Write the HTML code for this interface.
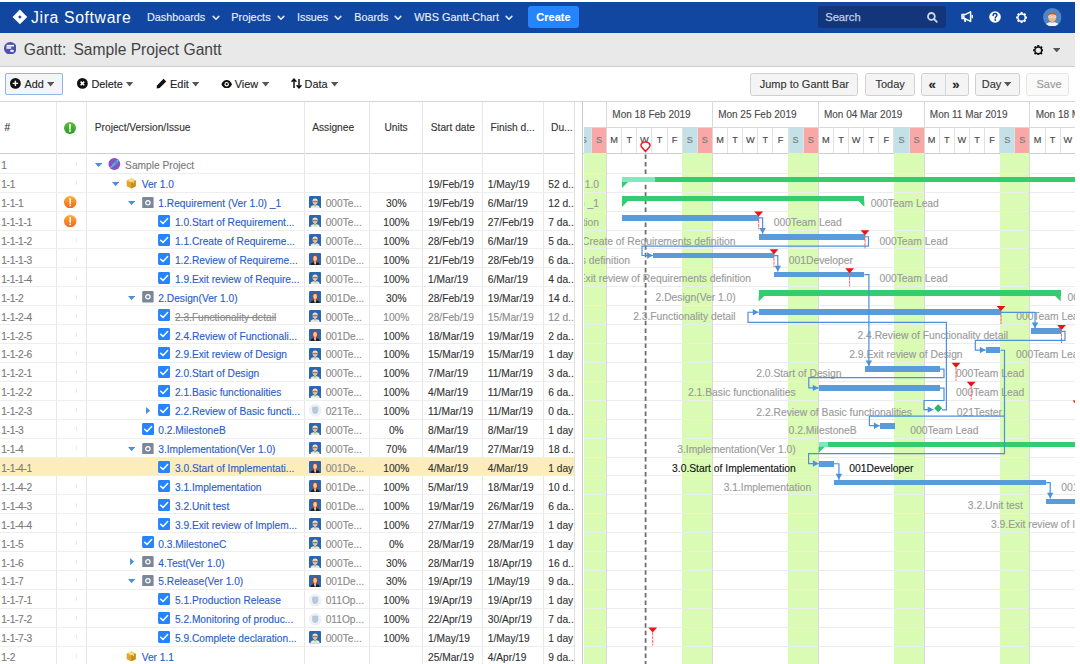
<!DOCTYPE html><html><head><meta charset="utf-8"><title>Gantt</title><style>
*{box-sizing:border-box;margin:0;padding:0}
html,body{width:1080px;height:664px;overflow:hidden;background:#fff}
body{position:relative;font-family:"Liberation Sans",sans-serif;color:#333}
.a{-webkit-text-stroke:0.12px currentColor}
.a{position:absolute;white-space:nowrap}
.nav{left:0;top:2px;width:1075px;height:30.5px;background:#1147a0}
.nt{color:#e6eeff;font-size:11.6px;top:11px}
.chev{position:absolute;width:5px;height:5px;border-right:1.6px solid #dfe9ff;border-bottom:1.6px solid #dfe9ff;transform:rotate(45deg)}
.title{left:0;top:32.5px;width:1075px;height:34.5px;background:#e9e9ea;border-bottom:1.2px solid #cdcdcd}
.tb{font-size:11.4px;color:#333;top:78px}
.caret{position:absolute;width:0;height:0;border-left:3.6px solid transparent;border-right:3.6px solid transparent;border-top:4px solid #555}
.btn{position:absolute;border:1px solid #d4d4d4;border-radius:3px;background:#f5f5f5;font-size:11.6px;color:#333;text-align:center}
.hl{background:#ddd}
.th{font-size:11.2px;color:#333}
.td{font-size:11.2px;color:#333}
.bar{position:absolute;background:#5b9bd8}
.gl{font-size:11.2px;color:#999}
</style></head><body>
<div class="a nav"></div>
<svg class="a" style="left:12.4px;top:9.4px" width="15.8" height="15.8" viewBox="0 0 17 17">
<path d="M8.5 0.6 L16.4 8.5 L8.5 16.4 L0.6 8.5 Z" fill="#fff"/>
<path d="M8.5 6.6 L10.4 8.5 L8.5 10.4 L6.6 8.5 Z" fill="#1147a0"/>
<path d="M8.5 0.6 L5.2 3.9 L6.2 4.9 L8.5 2.6 Z" fill="#c9d8f2" opacity="0.6"/>
</svg>
<div class="a" style="left:31.10px;top:10.23px;font-size:15.80px;line-height:1;color:#fff;letter-spacing:0.62px;-webkit-text-stroke:0">Jira Software</div>
<div class="a" style="left:147.00px;top:12.16px;font-size:10.80px;line-height:1;color:#e8efff;font-weight:normal">Dashboards</div>
<svg class="a" style="left:211.5px;top:14.5px" width="8" height="6" viewBox="0 0 8 6"><path d="M1.2 1.4 L4 4.2 L6.8 1.4" fill="none" stroke="#dfe9ff" stroke-width="1.6" stroke-linecap="round" stroke-linejoin="round"/></svg>
<div class="a" style="left:231.25px;top:12.07px;font-size:10.90px;line-height:1;color:#e8efff;font-weight:normal">Projects</div>
<svg class="a" style="left:276.5px;top:14.5px" width="8" height="6" viewBox="0 0 8 6"><path d="M1.2 1.4 L4 4.2 L6.8 1.4" fill="none" stroke="#dfe9ff" stroke-width="1.6" stroke-linecap="round" stroke-linejoin="round"/></svg>
<div class="a" style="left:297.00px;top:12.16px;font-size:10.80px;line-height:1;color:#e8efff;font-weight:normal">Issues</div>
<svg class="a" style="left:334.0px;top:14.5px" width="8" height="6" viewBox="0 0 8 6"><path d="M1.2 1.4 L4 4.2 L6.8 1.4" fill="none" stroke="#dfe9ff" stroke-width="1.6" stroke-linecap="round" stroke-linejoin="round"/></svg>
<div class="a" style="left:354.25px;top:12.16px;font-size:10.80px;line-height:1;color:#e8efff;font-weight:normal">Boards</div>
<svg class="a" style="left:394.0px;top:14.5px" width="8" height="6" viewBox="0 0 8 6"><path d="M1.2 1.4 L4 4.2 L6.8 1.4" fill="none" stroke="#dfe9ff" stroke-width="1.6" stroke-linecap="round" stroke-linejoin="round"/></svg>
<div class="a" style="left:414.25px;top:12.07px;font-size:10.90px;line-height:1;color:#e8efff;font-weight:normal">WBS Gantt-Chart</div>
<svg class="a" style="left:505.0px;top:14.5px" width="8" height="6" viewBox="0 0 8 6"><path d="M1.2 1.4 L4 4.2 L6.8 1.4" fill="none" stroke="#dfe9ff" stroke-width="1.6" stroke-linecap="round" stroke-linejoin="round"/></svg>
<div class="a" style="left:528.3px;top:6.3px;width:50.5px;height:22px;background:#2684ff;border-radius:3px"></div>
<div class="a" style="left:536.30px;top:11.99px;font-size:11.00px;line-height:1;color:#fff;font-weight:bold">Create</div>
<div class="a" style="left:817.6px;top:6.2px;width:128px;height:21.8px;background:#13367a;border-radius:3px"></div>
<div class="a" style="left:825.20px;top:11.72px;font-size:11.20px;line-height:1;color:#c3cee6;-webkit-text-stroke:0.25px currentColor">Search</div>
<svg class="a" style="left:926px;top:11px" width="13" height="13" viewBox="0 0 13 13">
<circle cx="5.4" cy="5.4" r="3.4" fill="none" stroke="#cdd6ea" stroke-width="1.8"/>
<path d="M7.9 7.9 L10.8 10.8" stroke="#cdd6ea" stroke-width="1.9" stroke-linecap="round"/></svg>
<svg class="a" style="left:961.3px;top:11.4px" width="12" height="11.5" viewBox="0 0 12 11.5">
<path d="M1 3.6 H4 L9.6 0.8 V10.4 L4 7.6 H1 Z" fill="none" stroke="#fff" stroke-width="1.5" stroke-linejoin="round"/>
<path d="M1.6 4.3 H3.6 V6.9 H1.6 Z" fill="#fff"/>
<path d="M2.8 7.6 L3.4 11 H5.2 L4.8 7.6" fill="#fff"/>
<path d="M11.2 4.4 V6.8" stroke="#fff" stroke-width="1.4" stroke-linecap="round"/></svg>
<svg class="a" style="left:988.5px;top:11px" width="12" height="12" viewBox="0 0 12 12">
<circle cx="6" cy="6" r="5.8" fill="#fff"/>
<path d="M4.1 4.6 C4.1 3.3 5 2.6 6 2.6 C7.1 2.6 7.9 3.3 7.9 4.3 C7.9 5.5 6.3 5.6 6.3 7" fill="none" stroke="#0f47a7" stroke-width="1.5" stroke-linecap="round"/>
<circle cx="6.2" cy="9" r="0.9" fill="#1147a0"/></svg>
<svg class="a" style="left:1016.3px;top:11.6px" width="11.2" height="11.2" viewBox="0 0 24 24">
<path fill="#fff" d="M21.09 9.61 L23.81 9.89 L23.81 14.11 L21.09 14.39 L20.12 16.74 L21.84 18.86 L18.86 21.84 L16.74 20.12 L14.39 21.09 L14.11 23.81 L9.89 23.81 L9.61 21.09 L7.26 20.12 L5.14 21.84 L2.16 18.86 L3.88 16.74 L2.91 14.39 L0.19 14.11 L0.19 9.89 L2.91 9.61 L3.88 7.26 L2.16 5.14 L5.14 2.16 L7.26 3.88 L9.61 2.91 L9.89 0.19 L14.11 0.19 L14.39 2.91 L16.74 3.88 L18.86 2.16 L21.84 5.14 L20.12 7.26 Z"/>
<circle cx="12" cy="12" r="6.3" fill="#1147a0"/></svg>
<svg class="a" style="left:1043px;top:7.6px" width="18.5" height="18.5" viewBox="0 0 20 20">
<defs><clipPath id="avc"><circle cx="10" cy="10" r="10"/></clipPath></defs>
<g clip-path="url(#avc)">
<rect width="20" height="20" fill="#4f86c6"/>
<ellipse cx="10" cy="20" rx="8" ry="5" fill="#f2f2f2"/>
<rect x="8.4" y="13" width="3.2" height="3" fill="#e9a77a"/>
<ellipse cx="10" cy="10" rx="4.4" ry="5" fill="#f0b48a"/>
<path d="M5.4 8.5 C5.2 3.5 14.8 3.5 14.6 8.5 C13.5 6.2 6.5 6.2 5.4 8.5 Z" fill="#c25a25"/>
<rect x="6.2" y="8.3" width="3.2" height="2.2" rx="1" fill="none" stroke="#eee" stroke-width="0.8"/>
<rect x="10.6" y="8.3" width="3.2" height="2.2" rx="1" fill="none" stroke="#eee" stroke-width="0.8"/>
</g></svg>
<div class="a title"></div>
<svg class="a" style="left:3.7px;top:41.9px" width="12.6" height="12.6" viewBox="0 0 12.6 12.6">
<circle cx="6.3" cy="6.3" r="6.3" fill="#4d51ad"/>
<rect x="2.6" y="2.9" width="7.4" height="1.6" fill="#fff"/>
<rect x="2.4" y="4.5" width="4.8" height="2.4" fill="#fff" opacity="0.8"/>
<rect x="6.2" y="7.8" width="3.6" height="2.1" rx="1" fill="#fff" opacity="0.9"/></svg>
<div class="a" style="left:23.80px;top:42.29px;font-size:15.60px;line-height:1;color:#444;-webkit-text-stroke:0">Gantt:<span style="display:inline-block;width:7.2px"></span>Sample Project Gantt</div>
<svg class="a" style="left:1032.5px;top:44.5px" width="10.6" height="10.6" viewBox="0 0 24 24">
<path fill="#111" d="M21.09 9.61 L23.81 9.89 L23.81 14.11 L21.09 14.39 L20.12 16.74 L21.84 18.86 L18.86 21.84 L16.74 20.12 L14.39 21.09 L14.11 23.81 L9.89 23.81 L9.61 21.09 L7.26 20.12 L5.14 21.84 L2.16 18.86 L3.88 16.74 L2.91 14.39 L0.19 14.11 L0.19 9.89 L2.91 9.61 L3.88 7.26 L2.16 5.14 L5.14 2.16 L7.26 3.88 L9.61 2.91 L9.89 0.19 L14.11 0.19 L14.39 2.91 L16.74 3.88 L18.86 2.16 L21.84 5.14 L20.12 7.26 Z"/>
<circle cx="12" cy="12" r="6" fill="#e9e9ea"/></svg>
<svg class="a" style="left:1053px;top:47.8px" width="7.4" height="4.4" viewBox="0 0 7.4 4.4"><path d="M0 0 H7.4 L3.7 4.4 Z" fill="#555"/></svg>
<div class="a" style="left:4.5px;top:73.4px;width:58.4px;height:22.1px;border:1px solid #8db6e6;border-radius:2px;background:#f3f5f8"></div>
<svg class="a" style="left:10.2px;top:78.4px" width="10.8" height="10.8" viewBox="0 0 12 12">
<circle cx="6" cy="6" r="6" fill="#111"/><path d="M6 3 V9 M3 6 H9" stroke="#fff" stroke-width="1.6"/></svg>
<div class="a" style="left:24.60px;top:79.46px;font-size:10.80px;line-height:1;color:#222;">Add</div>
<svg class="a" style="left:47.3px;top:82.4px" width="7.2" height="4.4" viewBox="0 0 7.2 4.4"><path d="M0 0 H7.2 L3.6 4.4 Z" fill="#555"/></svg>
<svg class="a" style="left:77px;top:78.4px" width="10.8" height="10.8" viewBox="0 0 12 12">
<circle cx="6" cy="6" r="6" fill="#111"/><path d="M4 4 L8 8 M8 4 L4 8" stroke="#fff" stroke-width="1.7"/></svg>
<div class="a" style="left:91.40px;top:79.37px;font-size:10.90px;line-height:1;color:#222;">Delete</div>
<svg class="a" style="left:126.4px;top:82.4px" width="7.2" height="4.4" viewBox="0 0 7.2 4.4"><path d="M0 0 H7.2 L3.6 4.4 Z" fill="#555"/></svg>
<svg class="a" style="left:155.8px;top:78.2px" width="11" height="11" viewBox="0 0 11 11">
<path d="M7.6 0.8 L10.2 3.4 L3.6 10 L0.6 10.4 L1 7.4 Z" fill="#111"/></svg>
<div class="a" style="left:170.10px;top:79.37px;font-size:10.90px;line-height:1;color:#222;">Edit</div>
<svg class="a" style="left:191.5px;top:82.4px" width="7.2" height="4.4" viewBox="0 0 7.2 4.4"><path d="M0 0 H7.2 L3.6 4.4 Z" fill="#555"/></svg>
<svg class="a" style="left:220.8px;top:79.6px" width="11.4" height="8.4" viewBox="0 0 12 9">
<path d="M0.3 4.5 C2 1 4 0 6 0 C8 0 10 1 11.7 4.5 C10 8 8 9 6 9 C4 9 2 8 0.3 4.5 Z" fill="#111"/>
<circle cx="6" cy="4.5" r="2.4" fill="#fff"/><circle cx="6" cy="4.5" r="1.2" fill="#111"/></svg>
<div class="a" style="left:234.70px;top:79.37px;font-size:10.90px;line-height:1;color:#222;">View</div>
<svg class="a" style="left:261.6px;top:82.4px" width="7.2" height="4.4" viewBox="0 0 7.2 4.4"><path d="M0 0 H7.2 L3.6 4.4 Z" fill="#555"/></svg>
<svg class="a" style="left:290.5px;top:78.2px" width="11" height="11" viewBox="0 0 11 11">
<path d="M3 10 V1.5 M0.6 3.8 L3 1.2 L5.4 3.8" fill="none" stroke="#111" stroke-width="1.5"/>
<path d="M8 1 V9.5 M5.6 7.2 L8 9.8 L10.4 7.2" fill="none" stroke="#111" stroke-width="1.5"/></svg>
<div class="a" style="left:304.60px;top:79.37px;font-size:10.90px;line-height:1;color:#222;">Data</div>
<svg class="a" style="left:330.9px;top:82.4px" width="7.2" height="4.4" viewBox="0 0 7.2 4.4"><path d="M0 0 H7.2 L3.6 4.4 Z" fill="#555"/></svg>
<div class="a" style="left:750.3px;top:72.7px;width:108.0px;height:23.8px;border:1px solid #d0d0d0;border-radius:2.5px;background:#f4f4f4"></div>
<div class="a" style="left:759.70px;top:79.29px;font-size:11.00px;line-height:1;color:#333;">Jump to Gantt Bar</div>
<div class="a" style="left:865.3px;top:72.7px;width:49.4px;height:23.8px;border:1px solid #d0d0d0;border-radius:2.5px;background:#f4f4f4"></div>
<div class="a" style="left:875.50px;top:79.29px;font-size:11.00px;line-height:1;color:#333;">Today</div>
<div class="a" style="left:921.2px;top:72.7px;width:47.4px;height:23.8px;border:1px solid #d0d0d0;border-radius:2.5px;background:#f4f4f4"></div>
<div class="a" style="left:945.2px;top:73px;width:1px;height:23px;background:#d6d6d6"></div>
<div class="a" style="left:928.60px;top:77.83px;font-size:13.20px;line-height:1;color:#222;font-weight:bold">&laquo;</div>
<div class="a" style="left:952.20px;top:77.83px;font-size:13.20px;line-height:1;color:#222;font-weight:bold">&raquo;</div>
<div class="a" style="left:975.0px;top:72.7px;width:44.7px;height:23.8px;border:1px solid #d0d0d0;border-radius:2.5px;background:#f4f4f4"></div>
<div class="a" style="left:981.70px;top:79.29px;font-size:11.00px;line-height:1;color:#333;">Day</div>
<svg class="a" style="left:1003.9px;top:82.4px" width="7.2" height="4.4" viewBox="0 0 7.2 4.4"><path d="M0 0 H7.2 L3.6 4.4 Z" fill="#555"/></svg>
<div class="a" style="left:1026.4px;top:72.7px;width:42.2px;height:23.8px;border:1px solid #e6e6e6;border-radius:2.5px;background:#fafafa"></div>
<div class="a" style="left:1036.50px;top:79.29px;font-size:11.00px;line-height:1;color:#999;">Save</div>
<div class="a" style="left:0;top:101px;width:1075px;height:1.1px;background:#d4d4d4"></div>
<div class="a" style="left:0;top:152.6px;width:574px;height:1.6px;background:#cfcfcf"></div>
<div class="a" style="left:583px;top:152.6px;width:492px;height:1.4px;background:#cfcfcf"></div>
<div class="a" style="left:55.90px;top:101.5px;width:1px;height:563px;background:#e7e7e7"></div>
<div class="a" style="left:86.00px;top:101.5px;width:1px;height:563px;background:#e7e7e7"></div>
<div class="a" style="left:303.80px;top:101.5px;width:1px;height:563px;background:#e7e7e7"></div>
<div class="a" style="left:369.20px;top:101.5px;width:1px;height:563px;background:#e7e7e7"></div>
<div class="a" style="left:422.00px;top:101.5px;width:1px;height:563px;background:#e7e7e7"></div>
<div class="a" style="left:482.00px;top:101.5px;width:1px;height:563px;background:#e7e7e7"></div>
<div class="a" style="left:542.80px;top:101.5px;width:1px;height:563px;background:#e7e7e7"></div>
<div class="a" style="left:574px;top:101.5px;width:9px;height:563px;background:#fff;border-left:1px solid #e0e0e0;border-right:1px solid #c8c8c8"></div>
<div class="a" style="left:4.40px;top:122.87px;font-size:10.20px;line-height:1;color:#333;">#</div>
<svg class="a" style="left:64.3px;top:121.6px" width="12" height="12" viewBox="0 0 12 12">
<defs><linearGradient id="gg" x1="0" y1="0" x2="0" y2="1"><stop offset="0" stop-color="#5cc23a"/><stop offset="1" stop-color="#2e9a2a"/></linearGradient></defs>
<circle cx="6" cy="6" r="6" fill="url(#gg)"/><path d="M6 2.6 V6.8" stroke="#fff" stroke-width="1.8" stroke-linecap="round"/><circle cx="6" cy="9" r="0.95" fill="#fff"/></svg>
<div class="a" style="left:94.80px;top:122.87px;font-size:10.20px;line-height:1;color:#333;">Project/Version/Issue</div>
<div class="a" style="left:312.20px;top:122.87px;font-size:10.20px;line-height:1;color:#333;">Assignee</div>
<div class="a" style="left:384.40px;top:122.87px;font-size:10.20px;line-height:1;color:#333;">Units</div>
<div class="a" style="left:430.80px;top:122.87px;font-size:10.20px;line-height:1;color:#333;">Start date</div>
<div class="a" style="left:490.60px;top:122.87px;font-size:10.20px;line-height:1;color:#333;">Finish d...</div>
<div class="a" style="left:551.10px;top:122.87px;font-size:10.20px;line-height:1;color:#333;">Du...</div>
<div class="a" style="left:0;top:457.46px;width:574px;height:18.42px;background:#fcedbb"></div>
<div class="a" style="left:0;top:172.82px;width:574px;height:1px;background:#eeeeee"></div>
<div class="a" style="left:1.20px;top:161.27px;font-size:10.20px;line-height:1;color:#7a7a7a;letter-spacing:-0.3px">1</div>
<div class="a" style="left:76.2px;top:162.30px;width:0.8px;height:4px;background:#e2f1de"></div>
<svg class="a" style="left:95.0px;top:163.1px" width="7.2" height="4.2" viewBox="0 0 7 4"><path d="M0 0 H7 L3.5 4 Z" fill="#4a8fdd"/></svg>
<svg class="a" style="left:108.0px;top:158.2px" width="12.7" height="12" viewBox="0 0 12 12">
<circle cx="6" cy="6" r="5.9" fill="#8a4fc8"/>
<path d="M2.8 9.2 L4 6.4 L7.8 2.6 C8.6 1.9 9.7 2 10 2.3 C10.2 2.6 10.2 3.6 9.5 4.3 L5.6 8 Z" fill="#3cc4c9"/>
<circle cx="7.6" cy="4.4" r="0.9" fill="#8a4fc8"/>
<path d="M2.4 9.6 L3.6 8.4" stroke="#fff" stroke-width="0.8"/></svg>
<div class="a" style="left:125.10px;top:161.27px;font-size:10.20px;line-height:1;color:#7a7a7a;">Sample Project</div>
<div class="a" style="left:0;top:191.73px;width:574px;height:1px;background:#eeeeee"></div>
<div class="a" style="left:1.20px;top:180.18px;font-size:10.20px;line-height:1;color:#7a7a7a;letter-spacing:-0.3px">1-1</div>
<div class="a" style="left:76.2px;top:181.22px;width:0.8px;height:4px;background:#e2f1de"></div>
<svg class="a" style="left:111.6px;top:182.0px" width="7.2" height="4.2" viewBox="0 0 7 4"><path d="M0 0 H7 L3.5 4 Z" fill="#4a8fdd"/></svg>
<svg class="a" style="left:125.9px;top:177.8px" width="10.4" height="10.8" viewBox="0 0 10 11">
<path d="M5 0.5 L9.6 2.6 V8.4 L5 10.6 L0.4 8.4 V2.6 Z" fill="#dea530"/>
<path d="M5 0.5 L9.6 2.6 L5 4.6 L0.4 2.6 Z" fill="#f7cf5e"/>
<path d="M5 4.6 L9.6 2.6 V8.4 L5 10.6 Z" fill="#c98b1c"/>
<path d="M2.6 1.5 L7.2 3.6 V5.2" fill="none" stroke="#fff3c0" stroke-width="0.8"/></svg>
<div class="a" style="left:141.70px;top:180.18px;font-size:10.20px;line-height:1;color:#2a5cc9;">Ver 1.0</div>
<div class="a" style="left:428.00px;top:180.18px;font-size:10.20px;line-height:1;color:#333;">19/Feb/19</div>
<div class="a" style="left:487.80px;top:180.18px;font-size:10.20px;line-height:1;color:#333;">1/May/19</div>
<div class="a" style="left:548.30px;top:180.18px;font-size:10.20px;line-height:1;color:#333;">52 d..</div>
<div class="a" style="left:0;top:210.65px;width:574px;height:1px;background:#eeeeee"></div>
<div class="a" style="left:1.20px;top:199.10px;font-size:10.20px;line-height:1;color:#7a7a7a;letter-spacing:-0.3px">1-1-1</div>
<svg class="a" style="left:64.3px;top:196.1px" width="12.4" height="12.4" viewBox="0 0 12 12">
<defs><linearGradient id="og202" x1="0" y1="0" x2="0" y2="1"><stop offset="0" stop-color="#fcae32"/><stop offset="1" stop-color="#f26522"/></linearGradient></defs>
<circle cx="6" cy="6" r="6" fill="url(#og202)"/><path d="M6 2.4 V7" stroke="#fff" stroke-width="1.5" stroke-linecap="round"/><circle cx="6" cy="9.1" r="0.85" fill="#fff"/></svg>
<svg class="a" style="left:128.2px;top:200.9px" width="7.2" height="4.2" viewBox="0 0 7 4"><path d="M0 0 H7 L3.5 4 Z" fill="#4a8fdd"/></svg>
<svg class="a" style="left:141.8px;top:196.6px" width="11.8" height="11.4" viewBox="0 0 12 12">
<rect width="12" height="12" rx="1.3" fill="#7b8698"/><circle cx="6" cy="6" r="2.3" fill="none" stroke="#fff" stroke-width="1.3"/></svg>
<div class="a" style="left:158.30px;top:199.10px;font-size:10.20px;line-height:1;color:#2a5cc9;">1.Requirement (Ver 1.0) _1</div>
<svg class="a" style="left:308.8px;top:196.3px" width="12.2" height="12.2" viewBox="0 0 12 12">
<rect width="12" height="12" rx="1.2" fill="#2b66b3"/>
<path d="M1.4 12 C1.6 9.6 3.2 8.8 6 8.8 C8.8 8.8 10.4 9.6 10.6 12 Z" fill="#e6e8ea"/>
<path d="M4.4 8.8 L6 10.6 L7.6 8.8 Z" fill="#72c23e"/>
<rect x="5.1" y="7.6" width="1.8" height="1.6" fill="#e8b083"/>
<ellipse cx="6" cy="5.4" rx="2.5" ry="2.9" fill="#efc49a"/>
<path d="M3.5 5 C3.3 1.8 8.7 1.8 8.5 5 C7.8 3.6 4.2 3.6 3.5 5 Z" fill="#f4e2b8"/>
<rect x="3.6" y="5" width="4.8" height="1.1" rx="0.4" fill="#6a6a6a" opacity="0.75"/>
</svg>
<div class="a" style="left:325.70px;top:199.10px;font-size:10.20px;line-height:1;color:#8a8a8a;">000Te...</div>
<div class="a" style="left:396.30px;width:0;display:flex;justify-content:center;top:199.10px;font-size:10.20px;line-height:1;color:#333;">30%</div>
<div class="a" style="left:428.00px;top:199.10px;font-size:10.20px;line-height:1;color:#333;">19/Feb/19</div>
<div class="a" style="left:487.80px;top:199.10px;font-size:10.20px;line-height:1;color:#333;">6/Mar/19</div>
<div class="a" style="left:548.30px;top:199.10px;font-size:10.20px;line-height:1;color:#333;">12 d..</div>
<div class="a" style="left:0;top:229.56px;width:574px;height:1px;background:#eeeeee"></div>
<div class="a" style="left:1.20px;top:218.01px;font-size:10.20px;line-height:1;color:#7a7a7a;letter-spacing:-0.3px">1-1-1-1</div>
<svg class="a" style="left:64.3px;top:215.0px" width="12.4" height="12.4" viewBox="0 0 12 12">
<defs><linearGradient id="og221" x1="0" y1="0" x2="0" y2="1"><stop offset="0" stop-color="#fcae32"/><stop offset="1" stop-color="#f26522"/></linearGradient></defs>
<circle cx="6" cy="6" r="6" fill="url(#og221)"/><path d="M6 2.4 V7" stroke="#fff" stroke-width="1.5" stroke-linecap="round"/><circle cx="6" cy="9.1" r="0.85" fill="#fff"/></svg>
<svg class="a" style="left:157.6px;top:214.8px" width="12.1" height="12" viewBox="0 0 12 12">
<rect width="12" height="12" rx="1.4" fill="#2684ff"/><path d="M2.6 6.2 L5 8.4 L9.6 3.6" fill="none" stroke="#fff" stroke-width="1.5" stroke-linecap="round" stroke-linejoin="round"/></svg>
<div class="a" style="left:174.90px;top:218.01px;font-size:10.20px;line-height:1;color:#2a5cc9;">1.0.Start of Requirement...</div>
<svg class="a" style="left:308.8px;top:215.2px" width="12.2" height="12.2" viewBox="0 0 12 12">
<rect width="12" height="12" rx="1.2" fill="#2b66b3"/>
<path d="M1.4 12 C1.6 9.6 3.2 8.8 6 8.8 C8.8 8.8 10.4 9.6 10.6 12 Z" fill="#e6e8ea"/>
<path d="M4.4 8.8 L6 10.6 L7.6 8.8 Z" fill="#72c23e"/>
<rect x="5.1" y="7.6" width="1.8" height="1.6" fill="#e8b083"/>
<ellipse cx="6" cy="5.4" rx="2.5" ry="2.9" fill="#efc49a"/>
<path d="M3.5 5 C3.3 1.8 8.7 1.8 8.5 5 C7.8 3.6 4.2 3.6 3.5 5 Z" fill="#f4e2b8"/>
<rect x="3.6" y="5" width="4.8" height="1.1" rx="0.4" fill="#6a6a6a" opacity="0.75"/>
</svg>
<div class="a" style="left:325.70px;top:218.01px;font-size:10.20px;line-height:1;color:#8a8a8a;">000Te...</div>
<div class="a" style="left:396.30px;width:0;display:flex;justify-content:center;top:218.01px;font-size:10.20px;line-height:1;color:#333;">100%</div>
<div class="a" style="left:428.00px;top:218.01px;font-size:10.20px;line-height:1;color:#333;">19/Feb/19</div>
<div class="a" style="left:487.80px;top:218.01px;font-size:10.20px;line-height:1;color:#333;">27/Feb/19</div>
<div class="a" style="left:548.30px;top:218.01px;font-size:10.20px;line-height:1;color:#333;">7 da..</div>
<div class="a" style="left:0;top:248.48px;width:574px;height:1px;background:#eeeeee"></div>
<div class="a" style="left:1.20px;top:236.93px;font-size:10.20px;line-height:1;color:#7a7a7a;letter-spacing:-0.3px">1-1-1-2</div>
<div class="a" style="left:76.2px;top:237.96px;width:0.8px;height:4px;background:#e2f1de"></div>
<svg class="a" style="left:157.6px;top:233.8px" width="12.1" height="12" viewBox="0 0 12 12">
<rect width="12" height="12" rx="1.4" fill="#2684ff"/><path d="M2.6 6.2 L5 8.4 L9.6 3.6" fill="none" stroke="#fff" stroke-width="1.5" stroke-linecap="round" stroke-linejoin="round"/></svg>
<div class="a" style="left:174.90px;top:236.93px;font-size:10.20px;line-height:1;color:#2a5cc9;">1.1.Create of Requireme...</div>
<svg class="a" style="left:308.8px;top:234.2px" width="12.2" height="12.2" viewBox="0 0 12 12">
<rect width="12" height="12" rx="1.2" fill="#2b66b3"/>
<path d="M1.4 12 C1.6 9.6 3.2 8.8 6 8.8 C8.8 8.8 10.4 9.6 10.6 12 Z" fill="#e6e8ea"/>
<path d="M4.4 8.8 L6 10.6 L7.6 8.8 Z" fill="#72c23e"/>
<rect x="5.1" y="7.6" width="1.8" height="1.6" fill="#e8b083"/>
<ellipse cx="6" cy="5.4" rx="2.5" ry="2.9" fill="#efc49a"/>
<path d="M3.5 5 C3.3 1.8 8.7 1.8 8.5 5 C7.8 3.6 4.2 3.6 3.5 5 Z" fill="#f4e2b8"/>
<rect x="3.6" y="5" width="4.8" height="1.1" rx="0.4" fill="#6a6a6a" opacity="0.75"/>
</svg>
<div class="a" style="left:325.70px;top:236.93px;font-size:10.20px;line-height:1;color:#8a8a8a;">000Te...</div>
<div class="a" style="left:396.30px;width:0;display:flex;justify-content:center;top:236.93px;font-size:10.20px;line-height:1;color:#333;">100%</div>
<div class="a" style="left:428.00px;top:236.93px;font-size:10.20px;line-height:1;color:#333;">28/Feb/19</div>
<div class="a" style="left:487.80px;top:236.93px;font-size:10.20px;line-height:1;color:#333;">6/Mar/19</div>
<div class="a" style="left:548.30px;top:236.93px;font-size:10.20px;line-height:1;color:#333;">5 da..</div>
<div class="a" style="left:0;top:267.40px;width:574px;height:1px;background:#eeeeee"></div>
<div class="a" style="left:1.20px;top:255.85px;font-size:10.20px;line-height:1;color:#7a7a7a;letter-spacing:-0.3px">1-1-1-3</div>
<div class="a" style="left:76.2px;top:256.88px;width:0.8px;height:4px;background:#e2f1de"></div>
<svg class="a" style="left:157.6px;top:252.7px" width="12.1" height="12" viewBox="0 0 12 12">
<rect width="12" height="12" rx="1.4" fill="#2684ff"/><path d="M2.6 6.2 L5 8.4 L9.6 3.6" fill="none" stroke="#fff" stroke-width="1.5" stroke-linecap="round" stroke-linejoin="round"/></svg>
<div class="a" style="left:174.90px;top:255.85px;font-size:10.20px;line-height:1;color:#2a5cc9;">1.2.Review of Requireme...</div>
<svg class="a" style="left:308.8px;top:253.1px" width="12.2" height="12.2" viewBox="0 0 12 12">
<rect width="12" height="12" rx="1.2" fill="#2b66b3"/>
<path d="M3.4 3.6 C3.4 0.8 8.6 0.8 8.6 3.6 L8.9 9.4 H3.1 Z" fill="#a9431f"/>
<path d="M1.6 12 C1.8 9.8 3 9.2 6 9.2 C9 9.2 10.2 9.8 10.4 12 Z" fill="#1d1d1d"/>
<path d="M4.8 9.2 L6 12 L7.2 9.2 Z" fill="#f4efe4"/>
<ellipse cx="6" cy="5.4" rx="1.9" ry="2.6" fill="#f2c6a0"/>
<rect x="5.3" y="7.4" width="1.4" height="2" fill="#eab894"/>
</svg>
<div class="a" style="left:325.70px;top:255.85px;font-size:10.20px;line-height:1;color:#8a8a8a;">001De...</div>
<div class="a" style="left:396.30px;width:0;display:flex;justify-content:center;top:255.85px;font-size:10.20px;line-height:1;color:#333;">100%</div>
<div class="a" style="left:428.00px;top:255.85px;font-size:10.20px;line-height:1;color:#333;">21/Feb/19</div>
<div class="a" style="left:487.80px;top:255.85px;font-size:10.20px;line-height:1;color:#333;">28/Feb/19</div>
<div class="a" style="left:548.30px;top:255.85px;font-size:10.20px;line-height:1;color:#333;">6 da..</div>
<div class="a" style="left:0;top:286.31px;width:574px;height:1px;background:#eeeeee"></div>
<div class="a" style="left:1.20px;top:274.76px;font-size:10.20px;line-height:1;color:#7a7a7a;letter-spacing:-0.3px">1-1-1-4</div>
<div class="a" style="left:76.2px;top:275.80px;width:0.8px;height:4px;background:#e2f1de"></div>
<svg class="a" style="left:157.6px;top:271.6px" width="12.1" height="12" viewBox="0 0 12 12">
<rect width="12" height="12" rx="1.4" fill="#2684ff"/><path d="M2.6 6.2 L5 8.4 L9.6 3.6" fill="none" stroke="#fff" stroke-width="1.5" stroke-linecap="round" stroke-linejoin="round"/></svg>
<div class="a" style="left:174.90px;top:274.76px;font-size:10.20px;line-height:1;color:#2a5cc9;">1.9.Exit review of Require...</div>
<svg class="a" style="left:308.8px;top:272.0px" width="12.2" height="12.2" viewBox="0 0 12 12">
<rect width="12" height="12" rx="1.2" fill="#2b66b3"/>
<path d="M1.4 12 C1.6 9.6 3.2 8.8 6 8.8 C8.8 8.8 10.4 9.6 10.6 12 Z" fill="#e6e8ea"/>
<path d="M4.4 8.8 L6 10.6 L7.6 8.8 Z" fill="#72c23e"/>
<rect x="5.1" y="7.6" width="1.8" height="1.6" fill="#e8b083"/>
<ellipse cx="6" cy="5.4" rx="2.5" ry="2.9" fill="#efc49a"/>
<path d="M3.5 5 C3.3 1.8 8.7 1.8 8.5 5 C7.8 3.6 4.2 3.6 3.5 5 Z" fill="#f4e2b8"/>
<rect x="3.6" y="5" width="4.8" height="1.1" rx="0.4" fill="#6a6a6a" opacity="0.75"/>
</svg>
<div class="a" style="left:325.70px;top:274.76px;font-size:10.20px;line-height:1;color:#8a8a8a;">000Te...</div>
<div class="a" style="left:396.30px;width:0;display:flex;justify-content:center;top:274.76px;font-size:10.20px;line-height:1;color:#333;">100%</div>
<div class="a" style="left:428.00px;top:274.76px;font-size:10.20px;line-height:1;color:#333;">1/Mar/19</div>
<div class="a" style="left:487.80px;top:274.76px;font-size:10.20px;line-height:1;color:#333;">6/Mar/19</div>
<div class="a" style="left:548.30px;top:274.76px;font-size:10.20px;line-height:1;color:#333;">4 da..</div>
<div class="a" style="left:0;top:305.23px;width:574px;height:1px;background:#eeeeee"></div>
<div class="a" style="left:1.20px;top:293.68px;font-size:10.20px;line-height:1;color:#7a7a7a;letter-spacing:-0.3px">1-1-2</div>
<div class="a" style="left:76.2px;top:294.71px;width:0.8px;height:4px;background:#e2f1de"></div>
<svg class="a" style="left:128.2px;top:295.5px" width="7.2" height="4.2" viewBox="0 0 7 4"><path d="M0 0 H7 L3.5 4 Z" fill="#4a8fdd"/></svg>
<svg class="a" style="left:141.8px;top:291.2px" width="11.8" height="11.4" viewBox="0 0 12 12">
<rect width="12" height="12" rx="1.3" fill="#7b8698"/><circle cx="6" cy="6" r="2.3" fill="none" stroke="#fff" stroke-width="1.3"/></svg>
<div class="a" style="left:158.30px;top:293.68px;font-size:10.20px;line-height:1;color:#2a5cc9;">2.Design(Ver 1.0)</div>
<svg class="a" style="left:308.8px;top:290.9px" width="12.2" height="12.2" viewBox="0 0 12 12">
<rect width="12" height="12" rx="1.2" fill="#2b66b3"/>
<path d="M3.4 3.6 C3.4 0.8 8.6 0.8 8.6 3.6 L8.9 9.4 H3.1 Z" fill="#a9431f"/>
<path d="M1.6 12 C1.8 9.8 3 9.2 6 9.2 C9 9.2 10.2 9.8 10.4 12 Z" fill="#1d1d1d"/>
<path d="M4.8 9.2 L6 12 L7.2 9.2 Z" fill="#f4efe4"/>
<ellipse cx="6" cy="5.4" rx="1.9" ry="2.6" fill="#f2c6a0"/>
<rect x="5.3" y="7.4" width="1.4" height="2" fill="#eab894"/>
</svg>
<div class="a" style="left:325.70px;top:293.68px;font-size:10.20px;line-height:1;color:#8a8a8a;">001De...</div>
<div class="a" style="left:396.30px;width:0;display:flex;justify-content:center;top:293.68px;font-size:10.20px;line-height:1;color:#333;">30%</div>
<div class="a" style="left:428.00px;top:293.68px;font-size:10.20px;line-height:1;color:#333;">28/Feb/19</div>
<div class="a" style="left:487.80px;top:293.68px;font-size:10.20px;line-height:1;color:#333;">19/Mar/19</div>
<div class="a" style="left:548.30px;top:293.68px;font-size:10.20px;line-height:1;color:#333;">14 d..</div>
<div class="a" style="left:0;top:324.14px;width:574px;height:1px;background:#eeeeee"></div>
<div class="a" style="left:1.20px;top:312.59px;font-size:10.20px;line-height:1;color:#7a7a7a;letter-spacing:-0.3px">1-1-2-4</div>
<div class="a" style="left:76.2px;top:313.63px;width:0.8px;height:4px;background:#e2f1de"></div>
<svg class="a" style="left:157.6px;top:309.4px" width="12.1" height="12" viewBox="0 0 12 12">
<rect width="12" height="12" rx="1.4" fill="#2684ff"/><path d="M2.6 6.2 L5 8.4 L9.6 3.6" fill="none" stroke="#fff" stroke-width="1.5" stroke-linecap="round" stroke-linejoin="round"/></svg>
<div class="a" style="left:174.90px;top:312.59px;font-size:10.20px;line-height:1;color:#8a8a8a;text-decoration:line-through">2.3.Functionality detail</div>
<svg class="a" style="left:308.8px;top:309.8px" width="12.2" height="12.2" viewBox="0 0 12 12">
<rect width="12" height="12" rx="1.2" fill="#2b66b3"/>
<path d="M1.4 12 C1.6 9.6 3.2 8.8 6 8.8 C8.8 8.8 10.4 9.6 10.6 12 Z" fill="#e6e8ea"/>
<path d="M4.4 8.8 L6 10.6 L7.6 8.8 Z" fill="#72c23e"/>
<rect x="5.1" y="7.6" width="1.8" height="1.6" fill="#e8b083"/>
<ellipse cx="6" cy="5.4" rx="2.5" ry="2.9" fill="#efc49a"/>
<path d="M3.5 5 C3.3 1.8 8.7 1.8 8.5 5 C7.8 3.6 4.2 3.6 3.5 5 Z" fill="#f4e2b8"/>
<rect x="3.6" y="5" width="4.8" height="1.1" rx="0.4" fill="#6a6a6a" opacity="0.75"/>
</svg>
<div class="a" style="left:325.70px;top:312.59px;font-size:10.20px;line-height:1;color:#8a8a8a;">000Te...</div>
<div class="a" style="left:396.30px;width:0;display:flex;justify-content:center;top:312.59px;font-size:10.20px;line-height:1;color:#8a8a8a;">100%</div>
<div class="a" style="left:428.00px;top:312.59px;font-size:10.20px;line-height:1;color:#8a8a8a;">28/Feb/19</div>
<div class="a" style="left:487.80px;top:312.59px;font-size:10.20px;line-height:1;color:#8a8a8a;">15/Mar/19</div>
<div class="a" style="left:548.30px;top:312.59px;font-size:10.20px;line-height:1;color:#8a8a8a;">12 d..</div>
<div class="a" style="left:0;top:343.06px;width:574px;height:1px;background:#eeeeee"></div>
<div class="a" style="left:1.20px;top:331.51px;font-size:10.20px;line-height:1;color:#7a7a7a;letter-spacing:-0.3px">1-1-2-5</div>
<div class="a" style="left:76.2px;top:332.54px;width:0.8px;height:4px;background:#e2f1de"></div>
<svg class="a" style="left:157.6px;top:328.3px" width="12.1" height="12" viewBox="0 0 12 12">
<rect width="12" height="12" rx="1.4" fill="#2684ff"/><path d="M2.6 6.2 L5 8.4 L9.6 3.6" fill="none" stroke="#fff" stroke-width="1.5" stroke-linecap="round" stroke-linejoin="round"/></svg>
<div class="a" style="left:174.90px;top:331.51px;font-size:10.20px;line-height:1;color:#2a5cc9;">2.4.Review of Functionali...</div>
<svg class="a" style="left:308.8px;top:328.7px" width="12.2" height="12.2" viewBox="0 0 12 12">
<rect width="12" height="12" rx="1.2" fill="#2b66b3"/>
<path d="M3.4 3.6 C3.4 0.8 8.6 0.8 8.6 3.6 L8.9 9.4 H3.1 Z" fill="#a9431f"/>
<path d="M1.6 12 C1.8 9.8 3 9.2 6 9.2 C9 9.2 10.2 9.8 10.4 12 Z" fill="#1d1d1d"/>
<path d="M4.8 9.2 L6 12 L7.2 9.2 Z" fill="#f4efe4"/>
<ellipse cx="6" cy="5.4" rx="1.9" ry="2.6" fill="#f2c6a0"/>
<rect x="5.3" y="7.4" width="1.4" height="2" fill="#eab894"/>
</svg>
<div class="a" style="left:325.70px;top:331.51px;font-size:10.20px;line-height:1;color:#8a8a8a;">001De...</div>
<div class="a" style="left:396.30px;width:0;display:flex;justify-content:center;top:331.51px;font-size:10.20px;line-height:1;color:#333;">100%</div>
<div class="a" style="left:428.00px;top:331.51px;font-size:10.20px;line-height:1;color:#333;">18/Mar/19</div>
<div class="a" style="left:487.80px;top:331.51px;font-size:10.20px;line-height:1;color:#333;">19/Mar/19</div>
<div class="a" style="left:548.30px;top:331.51px;font-size:10.20px;line-height:1;color:#333;">2 da..</div>
<div class="a" style="left:0;top:361.98px;width:574px;height:1px;background:#eeeeee"></div>
<div class="a" style="left:1.20px;top:350.43px;font-size:10.20px;line-height:1;color:#7a7a7a;letter-spacing:-0.3px">1-1-2-6</div>
<div class="a" style="left:76.2px;top:351.46px;width:0.8px;height:4px;background:#e2f1de"></div>
<svg class="a" style="left:157.6px;top:347.3px" width="12.1" height="12" viewBox="0 0 12 12">
<rect width="12" height="12" rx="1.4" fill="#2684ff"/><path d="M2.6 6.2 L5 8.4 L9.6 3.6" fill="none" stroke="#fff" stroke-width="1.5" stroke-linecap="round" stroke-linejoin="round"/></svg>
<div class="a" style="left:174.90px;top:350.43px;font-size:10.20px;line-height:1;color:#2a5cc9;">2.9.Exit review of Design</div>
<svg class="a" style="left:308.8px;top:347.7px" width="12.2" height="12.2" viewBox="0 0 12 12">
<rect width="12" height="12" rx="1.2" fill="#2b66b3"/>
<path d="M1.4 12 C1.6 9.6 3.2 8.8 6 8.8 C8.8 8.8 10.4 9.6 10.6 12 Z" fill="#e6e8ea"/>
<path d="M4.4 8.8 L6 10.6 L7.6 8.8 Z" fill="#72c23e"/>
<rect x="5.1" y="7.6" width="1.8" height="1.6" fill="#e8b083"/>
<ellipse cx="6" cy="5.4" rx="2.5" ry="2.9" fill="#efc49a"/>
<path d="M3.5 5 C3.3 1.8 8.7 1.8 8.5 5 C7.8 3.6 4.2 3.6 3.5 5 Z" fill="#f4e2b8"/>
<rect x="3.6" y="5" width="4.8" height="1.1" rx="0.4" fill="#6a6a6a" opacity="0.75"/>
</svg>
<div class="a" style="left:325.70px;top:350.43px;font-size:10.20px;line-height:1;color:#8a8a8a;">000Te...</div>
<div class="a" style="left:396.30px;width:0;display:flex;justify-content:center;top:350.43px;font-size:10.20px;line-height:1;color:#333;">100%</div>
<div class="a" style="left:428.00px;top:350.43px;font-size:10.20px;line-height:1;color:#333;">15/Mar/19</div>
<div class="a" style="left:487.80px;top:350.43px;font-size:10.20px;line-height:1;color:#333;">15/Mar/19</div>
<div class="a" style="left:548.30px;top:350.43px;font-size:10.20px;line-height:1;color:#333;">1 day</div>
<div class="a" style="left:0;top:380.89px;width:574px;height:1px;background:#eeeeee"></div>
<div class="a" style="left:1.20px;top:369.34px;font-size:10.20px;line-height:1;color:#7a7a7a;letter-spacing:-0.3px">1-1-2-1</div>
<div class="a" style="left:76.2px;top:370.38px;width:0.8px;height:4px;background:#e2f1de"></div>
<svg class="a" style="left:157.6px;top:366.2px" width="12.1" height="12" viewBox="0 0 12 12">
<rect width="12" height="12" rx="1.4" fill="#2684ff"/><path d="M2.6 6.2 L5 8.4 L9.6 3.6" fill="none" stroke="#fff" stroke-width="1.5" stroke-linecap="round" stroke-linejoin="round"/></svg>
<div class="a" style="left:174.90px;top:369.34px;font-size:10.20px;line-height:1;color:#2a5cc9;">2.0.Start of Design</div>
<svg class="a" style="left:308.8px;top:366.6px" width="12.2" height="12.2" viewBox="0 0 12 12">
<rect width="12" height="12" rx="1.2" fill="#2b66b3"/>
<path d="M1.4 12 C1.6 9.6 3.2 8.8 6 8.8 C8.8 8.8 10.4 9.6 10.6 12 Z" fill="#e6e8ea"/>
<path d="M4.4 8.8 L6 10.6 L7.6 8.8 Z" fill="#72c23e"/>
<rect x="5.1" y="7.6" width="1.8" height="1.6" fill="#e8b083"/>
<ellipse cx="6" cy="5.4" rx="2.5" ry="2.9" fill="#efc49a"/>
<path d="M3.5 5 C3.3 1.8 8.7 1.8 8.5 5 C7.8 3.6 4.2 3.6 3.5 5 Z" fill="#f4e2b8"/>
<rect x="3.6" y="5" width="4.8" height="1.1" rx="0.4" fill="#6a6a6a" opacity="0.75"/>
</svg>
<div class="a" style="left:325.70px;top:369.34px;font-size:10.20px;line-height:1;color:#8a8a8a;">000Te...</div>
<div class="a" style="left:396.30px;width:0;display:flex;justify-content:center;top:369.34px;font-size:10.20px;line-height:1;color:#333;">100%</div>
<div class="a" style="left:428.00px;top:369.34px;font-size:10.20px;line-height:1;color:#333;">7/Mar/19</div>
<div class="a" style="left:487.80px;top:369.34px;font-size:10.20px;line-height:1;color:#333;">11/Mar/19</div>
<div class="a" style="left:548.30px;top:369.34px;font-size:10.20px;line-height:1;color:#333;">3 da..</div>
<div class="a" style="left:0;top:399.81px;width:574px;height:1px;background:#eeeeee"></div>
<div class="a" style="left:1.20px;top:388.26px;font-size:10.20px;line-height:1;color:#7a7a7a;letter-spacing:-0.3px">1-1-2-2</div>
<div class="a" style="left:76.2px;top:389.29px;width:0.8px;height:4px;background:#e2f1de"></div>
<svg class="a" style="left:157.6px;top:385.1px" width="12.1" height="12" viewBox="0 0 12 12">
<rect width="12" height="12" rx="1.4" fill="#2684ff"/><path d="M2.6 6.2 L5 8.4 L9.6 3.6" fill="none" stroke="#fff" stroke-width="1.5" stroke-linecap="round" stroke-linejoin="round"/></svg>
<div class="a" style="left:174.90px;top:388.26px;font-size:10.20px;line-height:1;color:#2a5cc9;">2.1.Basic functionalities</div>
<svg class="a" style="left:308.8px;top:385.5px" width="12.2" height="12.2" viewBox="0 0 12 12">
<rect width="12" height="12" rx="1.2" fill="#2b66b3"/>
<path d="M1.4 12 C1.6 9.6 3.2 8.8 6 8.8 C8.8 8.8 10.4 9.6 10.6 12 Z" fill="#e6e8ea"/>
<path d="M4.4 8.8 L6 10.6 L7.6 8.8 Z" fill="#72c23e"/>
<rect x="5.1" y="7.6" width="1.8" height="1.6" fill="#e8b083"/>
<ellipse cx="6" cy="5.4" rx="2.5" ry="2.9" fill="#efc49a"/>
<path d="M3.5 5 C3.3 1.8 8.7 1.8 8.5 5 C7.8 3.6 4.2 3.6 3.5 5 Z" fill="#f4e2b8"/>
<rect x="3.6" y="5" width="4.8" height="1.1" rx="0.4" fill="#6a6a6a" opacity="0.75"/>
</svg>
<div class="a" style="left:325.70px;top:388.26px;font-size:10.20px;line-height:1;color:#8a8a8a;">000Te...</div>
<div class="a" style="left:396.30px;width:0;display:flex;justify-content:center;top:388.26px;font-size:10.20px;line-height:1;color:#333;">100%</div>
<div class="a" style="left:428.00px;top:388.26px;font-size:10.20px;line-height:1;color:#333;">4/Mar/19</div>
<div class="a" style="left:487.80px;top:388.26px;font-size:10.20px;line-height:1;color:#333;">11/Mar/19</div>
<div class="a" style="left:548.30px;top:388.26px;font-size:10.20px;line-height:1;color:#333;">6 da..</div>
<div class="a" style="left:0;top:418.72px;width:574px;height:1px;background:#eeeeee"></div>
<div class="a" style="left:1.20px;top:407.17px;font-size:10.20px;line-height:1;color:#7a7a7a;letter-spacing:-0.3px">1-1-2-3</div>
<div class="a" style="left:76.2px;top:408.21px;width:0.8px;height:4px;background:#e2f1de"></div>
<svg class="a" style="left:146.3px;top:406.8px" width="4.2" height="7.2" viewBox="0 0 4 7"><path d="M0 0 V7 L4 3.5 Z" fill="#4a8fdd"/></svg>
<svg class="a" style="left:157.6px;top:404.0px" width="12.1" height="12" viewBox="0 0 12 12">
<rect width="12" height="12" rx="1.4" fill="#2684ff"/><path d="M2.6 6.2 L5 8.4 L9.6 3.6" fill="none" stroke="#fff" stroke-width="1.5" stroke-linecap="round" stroke-linejoin="round"/></svg>
<div class="a" style="left:174.90px;top:407.17px;font-size:10.20px;line-height:1;color:#2a5cc9;">2.2.Review of Basic functi...</div>
<svg class="a" style="left:308.8px;top:404.4px" width="12.4" height="12.4" viewBox="0 0 12 12">
<circle cx="6" cy="6" r="5.8" fill="#eef3f9" stroke="#dde6f0" stroke-width="0.4"/>
<path d="M3 3.4 C3 2 9 2 9 3.4 V6.4 C9 8.8 7.4 9.8 6 9.8 C4.6 9.8 3 8.8 3 6.4 Z" fill="#b9c8da"/>
</svg>
<div class="a" style="left:325.70px;top:407.17px;font-size:10.20px;line-height:1;color:#8a8a8a;">021Te...</div>
<div class="a" style="left:396.30px;width:0;display:flex;justify-content:center;top:407.17px;font-size:10.20px;line-height:1;color:#333;">100%</div>
<div class="a" style="left:428.00px;top:407.17px;font-size:10.20px;line-height:1;color:#333;">11/Mar/19</div>
<div class="a" style="left:487.80px;top:407.17px;font-size:10.20px;line-height:1;color:#333;">11/Mar/19</div>
<div class="a" style="left:548.30px;top:407.17px;font-size:10.20px;line-height:1;color:#333;">0 da..</div>
<div class="a" style="left:0;top:437.64px;width:574px;height:1px;background:#eeeeee"></div>
<div class="a" style="left:1.20px;top:426.09px;font-size:10.20px;line-height:1;color:#7a7a7a;letter-spacing:-0.3px">1-1-3</div>
<div class="a" style="left:76.2px;top:427.12px;width:0.8px;height:4px;background:#e2f1de"></div>
<svg class="a" style="left:141.8px;top:422.9px" width="12.1" height="12" viewBox="0 0 12 12">
<rect width="12" height="12" rx="1.4" fill="#2684ff"/><path d="M2.6 6.2 L5 8.4 L9.6 3.6" fill="none" stroke="#fff" stroke-width="1.5" stroke-linecap="round" stroke-linejoin="round"/></svg>
<div class="a" style="left:158.30px;top:426.09px;font-size:10.20px;line-height:1;color:#2a5cc9;">0.2.MilestoneB</div>
<svg class="a" style="left:308.8px;top:423.3px" width="12.2" height="12.2" viewBox="0 0 12 12">
<rect width="12" height="12" rx="1.2" fill="#2b66b3"/>
<path d="M1.4 12 C1.6 9.6 3.2 8.8 6 8.8 C8.8 8.8 10.4 9.6 10.6 12 Z" fill="#e6e8ea"/>
<path d="M4.4 8.8 L6 10.6 L7.6 8.8 Z" fill="#72c23e"/>
<rect x="5.1" y="7.6" width="1.8" height="1.6" fill="#e8b083"/>
<ellipse cx="6" cy="5.4" rx="2.5" ry="2.9" fill="#efc49a"/>
<path d="M3.5 5 C3.3 1.8 8.7 1.8 8.5 5 C7.8 3.6 4.2 3.6 3.5 5 Z" fill="#f4e2b8"/>
<rect x="3.6" y="5" width="4.8" height="1.1" rx="0.4" fill="#6a6a6a" opacity="0.75"/>
</svg>
<div class="a" style="left:325.70px;top:426.09px;font-size:10.20px;line-height:1;color:#8a8a8a;">000Te...</div>
<div class="a" style="left:396.30px;width:0;display:flex;justify-content:center;top:426.09px;font-size:10.20px;line-height:1;color:#333;">0%</div>
<div class="a" style="left:428.00px;top:426.09px;font-size:10.20px;line-height:1;color:#333;">8/Mar/19</div>
<div class="a" style="left:487.80px;top:426.09px;font-size:10.20px;line-height:1;color:#333;">8/Mar/19</div>
<div class="a" style="left:548.30px;top:426.09px;font-size:10.20px;line-height:1;color:#333;">1 day</div>
<div class="a" style="left:0;top:456.56px;width:574px;height:1px;background:#eeeeee"></div>
<div class="a" style="left:1.20px;top:445.01px;font-size:10.20px;line-height:1;color:#7a7a7a;letter-spacing:-0.3px">1-1-4</div>
<div class="a" style="left:76.2px;top:446.04px;width:0.8px;height:4px;background:#e2f1de"></div>
<svg class="a" style="left:128.2px;top:446.8px" width="7.2" height="4.2" viewBox="0 0 7 4"><path d="M0 0 H7 L3.5 4 Z" fill="#4a8fdd"/></svg>
<svg class="a" style="left:141.8px;top:442.5px" width="11.8" height="11.4" viewBox="0 0 12 12">
<rect width="12" height="12" rx="1.3" fill="#7b8698"/><circle cx="6" cy="6" r="2.3" fill="none" stroke="#fff" stroke-width="1.3"/></svg>
<div class="a" style="left:158.30px;top:445.01px;font-size:10.20px;line-height:1;color:#2a5cc9;">3.Implementation(Ver 1.0)</div>
<svg class="a" style="left:308.8px;top:442.2px" width="12.2" height="12.2" viewBox="0 0 12 12">
<rect width="12" height="12" rx="1.2" fill="#2b66b3"/>
<path d="M1.4 12 C1.6 9.6 3.2 8.8 6 8.8 C8.8 8.8 10.4 9.6 10.6 12 Z" fill="#e6e8ea"/>
<path d="M4.4 8.8 L6 10.6 L7.6 8.8 Z" fill="#72c23e"/>
<rect x="5.1" y="7.6" width="1.8" height="1.6" fill="#e8b083"/>
<ellipse cx="6" cy="5.4" rx="2.5" ry="2.9" fill="#efc49a"/>
<path d="M3.5 5 C3.3 1.8 8.7 1.8 8.5 5 C7.8 3.6 4.2 3.6 3.5 5 Z" fill="#f4e2b8"/>
<rect x="3.6" y="5" width="4.8" height="1.1" rx="0.4" fill="#6a6a6a" opacity="0.75"/>
</svg>
<div class="a" style="left:325.70px;top:445.01px;font-size:10.20px;line-height:1;color:#8a8a8a;">000Te...</div>
<div class="a" style="left:396.30px;width:0;display:flex;justify-content:center;top:445.01px;font-size:10.20px;line-height:1;color:#333;">70%</div>
<div class="a" style="left:428.00px;top:445.01px;font-size:10.20px;line-height:1;color:#333;">4/Mar/19</div>
<div class="a" style="left:487.80px;top:445.01px;font-size:10.20px;line-height:1;color:#333;">27/Mar/19</div>
<div class="a" style="left:548.30px;top:445.01px;font-size:10.20px;line-height:1;color:#333;">18 d..</div>
<div class="a" style="left:0;top:475.47px;width:574px;height:1px;background:#eeeeee"></div>
<div class="a" style="left:1.20px;top:463.92px;font-size:10.20px;line-height:1;color:#7a7a7a;letter-spacing:-0.3px">1-1-4-1</div>
<div class="a" style="left:76.2px;top:464.96px;width:0.8px;height:4px;background:#e2f1de"></div>
<svg class="a" style="left:157.6px;top:460.8px" width="12.1" height="12" viewBox="0 0 12 12">
<rect width="12" height="12" rx="1.4" fill="#2684ff"/><path d="M2.6 6.2 L5 8.4 L9.6 3.6" fill="none" stroke="#fff" stroke-width="1.5" stroke-linecap="round" stroke-linejoin="round"/></svg>
<div class="a" style="left:174.90px;top:463.92px;font-size:10.20px;line-height:1;color:#2a5cc9;">3.0.Start of Implementati...</div>
<svg class="a" style="left:308.8px;top:461.2px" width="12.2" height="12.2" viewBox="0 0 12 12">
<rect width="12" height="12" rx="1.2" fill="#2b66b3"/>
<path d="M3.4 3.6 C3.4 0.8 8.6 0.8 8.6 3.6 L8.9 9.4 H3.1 Z" fill="#a9431f"/>
<path d="M1.6 12 C1.8 9.8 3 9.2 6 9.2 C9 9.2 10.2 9.8 10.4 12 Z" fill="#1d1d1d"/>
<path d="M4.8 9.2 L6 12 L7.2 9.2 Z" fill="#f4efe4"/>
<ellipse cx="6" cy="5.4" rx="1.9" ry="2.6" fill="#f2c6a0"/>
<rect x="5.3" y="7.4" width="1.4" height="2" fill="#eab894"/>
</svg>
<div class="a" style="left:325.70px;top:463.92px;font-size:10.20px;line-height:1;color:#8a8a8a;">001De...</div>
<div class="a" style="left:396.30px;width:0;display:flex;justify-content:center;top:463.92px;font-size:10.20px;line-height:1;color:#333;">100%</div>
<div class="a" style="left:428.00px;top:463.92px;font-size:10.20px;line-height:1;color:#333;">4/Mar/19</div>
<div class="a" style="left:487.80px;top:463.92px;font-size:10.20px;line-height:1;color:#333;">4/Mar/19</div>
<div class="a" style="left:548.30px;top:463.92px;font-size:10.20px;line-height:1;color:#333;">1 day</div>
<div class="a" style="left:0;top:494.39px;width:574px;height:1px;background:#eeeeee"></div>
<div class="a" style="left:1.20px;top:482.84px;font-size:10.20px;line-height:1;color:#7a7a7a;letter-spacing:-0.3px">1-1-4-2</div>
<div class="a" style="left:76.2px;top:483.87px;width:0.8px;height:4px;background:#e2f1de"></div>
<svg class="a" style="left:157.6px;top:479.7px" width="12.1" height="12" viewBox="0 0 12 12">
<rect width="12" height="12" rx="1.4" fill="#2684ff"/><path d="M2.6 6.2 L5 8.4 L9.6 3.6" fill="none" stroke="#fff" stroke-width="1.5" stroke-linecap="round" stroke-linejoin="round"/></svg>
<div class="a" style="left:174.90px;top:482.84px;font-size:10.20px;line-height:1;color:#2a5cc9;">3.1.Implementation</div>
<svg class="a" style="left:308.8px;top:480.1px" width="12.2" height="12.2" viewBox="0 0 12 12">
<rect width="12" height="12" rx="1.2" fill="#2b66b3"/>
<path d="M3.4 3.6 C3.4 0.8 8.6 0.8 8.6 3.6 L8.9 9.4 H3.1 Z" fill="#a9431f"/>
<path d="M1.6 12 C1.8 9.8 3 9.2 6 9.2 C9 9.2 10.2 9.8 10.4 12 Z" fill="#1d1d1d"/>
<path d="M4.8 9.2 L6 12 L7.2 9.2 Z" fill="#f4efe4"/>
<ellipse cx="6" cy="5.4" rx="1.9" ry="2.6" fill="#f2c6a0"/>
<rect x="5.3" y="7.4" width="1.4" height="2" fill="#eab894"/>
</svg>
<div class="a" style="left:325.70px;top:482.84px;font-size:10.20px;line-height:1;color:#8a8a8a;">001De...</div>
<div class="a" style="left:396.30px;width:0;display:flex;justify-content:center;top:482.84px;font-size:10.20px;line-height:1;color:#333;">100%</div>
<div class="a" style="left:428.00px;top:482.84px;font-size:10.20px;line-height:1;color:#333;">5/Mar/19</div>
<div class="a" style="left:487.80px;top:482.84px;font-size:10.20px;line-height:1;color:#333;">18/Mar/19</div>
<div class="a" style="left:548.30px;top:482.84px;font-size:10.20px;line-height:1;color:#333;">10 d..</div>
<div class="a" style="left:0;top:513.30px;width:574px;height:1px;background:#eeeeee"></div>
<div class="a" style="left:1.20px;top:501.75px;font-size:10.20px;line-height:1;color:#7a7a7a;letter-spacing:-0.3px">1-1-4-3</div>
<div class="a" style="left:76.2px;top:502.79px;width:0.8px;height:4px;background:#e2f1de"></div>
<svg class="a" style="left:157.6px;top:498.6px" width="12.1" height="12" viewBox="0 0 12 12">
<rect width="12" height="12" rx="1.4" fill="#2684ff"/><path d="M2.6 6.2 L5 8.4 L9.6 3.6" fill="none" stroke="#fff" stroke-width="1.5" stroke-linecap="round" stroke-linejoin="round"/></svg>
<div class="a" style="left:174.90px;top:501.75px;font-size:10.20px;line-height:1;color:#2a5cc9;">3.2.Unit test</div>
<svg class="a" style="left:308.8px;top:499.0px" width="12.2" height="12.2" viewBox="0 0 12 12">
<rect width="12" height="12" rx="1.2" fill="#2b66b3"/>
<path d="M3.4 3.6 C3.4 0.8 8.6 0.8 8.6 3.6 L8.9 9.4 H3.1 Z" fill="#a9431f"/>
<path d="M1.6 12 C1.8 9.8 3 9.2 6 9.2 C9 9.2 10.2 9.8 10.4 12 Z" fill="#1d1d1d"/>
<path d="M4.8 9.2 L6 12 L7.2 9.2 Z" fill="#f4efe4"/>
<ellipse cx="6" cy="5.4" rx="1.9" ry="2.6" fill="#f2c6a0"/>
<rect x="5.3" y="7.4" width="1.4" height="2" fill="#eab894"/>
</svg>
<div class="a" style="left:325.70px;top:501.75px;font-size:10.20px;line-height:1;color:#8a8a8a;">001De...</div>
<div class="a" style="left:396.30px;width:0;display:flex;justify-content:center;top:501.75px;font-size:10.20px;line-height:1;color:#333;">100%</div>
<div class="a" style="left:428.00px;top:501.75px;font-size:10.20px;line-height:1;color:#333;">19/Mar/19</div>
<div class="a" style="left:487.80px;top:501.75px;font-size:10.20px;line-height:1;color:#333;">26/Mar/19</div>
<div class="a" style="left:548.30px;top:501.75px;font-size:10.20px;line-height:1;color:#333;">6 da..</div>
<div class="a" style="left:0;top:532.22px;width:574px;height:1px;background:#eeeeee"></div>
<div class="a" style="left:1.20px;top:520.67px;font-size:10.20px;line-height:1;color:#7a7a7a;letter-spacing:-0.3px">1-1-4-4</div>
<div class="a" style="left:76.2px;top:521.70px;width:0.8px;height:4px;background:#e2f1de"></div>
<svg class="a" style="left:157.6px;top:517.5px" width="12.1" height="12" viewBox="0 0 12 12">
<rect width="12" height="12" rx="1.4" fill="#2684ff"/><path d="M2.6 6.2 L5 8.4 L9.6 3.6" fill="none" stroke="#fff" stroke-width="1.5" stroke-linecap="round" stroke-linejoin="round"/></svg>
<div class="a" style="left:174.90px;top:520.67px;font-size:10.20px;line-height:1;color:#2a5cc9;">3.9.Exit review of Implem...</div>
<svg class="a" style="left:308.8px;top:517.9px" width="12.2" height="12.2" viewBox="0 0 12 12">
<rect width="12" height="12" rx="1.2" fill="#2b66b3"/>
<path d="M1.4 12 C1.6 9.6 3.2 8.8 6 8.8 C8.8 8.8 10.4 9.6 10.6 12 Z" fill="#e6e8ea"/>
<path d="M4.4 8.8 L6 10.6 L7.6 8.8 Z" fill="#72c23e"/>
<rect x="5.1" y="7.6" width="1.8" height="1.6" fill="#e8b083"/>
<ellipse cx="6" cy="5.4" rx="2.5" ry="2.9" fill="#efc49a"/>
<path d="M3.5 5 C3.3 1.8 8.7 1.8 8.5 5 C7.8 3.6 4.2 3.6 3.5 5 Z" fill="#f4e2b8"/>
<rect x="3.6" y="5" width="4.8" height="1.1" rx="0.4" fill="#6a6a6a" opacity="0.75"/>
</svg>
<div class="a" style="left:325.70px;top:520.67px;font-size:10.20px;line-height:1;color:#8a8a8a;">000Te...</div>
<div class="a" style="left:396.30px;width:0;display:flex;justify-content:center;top:520.67px;font-size:10.20px;line-height:1;color:#333;">100%</div>
<div class="a" style="left:428.00px;top:520.67px;font-size:10.20px;line-height:1;color:#333;">27/Mar/19</div>
<div class="a" style="left:487.80px;top:520.67px;font-size:10.20px;line-height:1;color:#333;">27/Mar/19</div>
<div class="a" style="left:548.30px;top:520.67px;font-size:10.20px;line-height:1;color:#333;">1 day</div>
<div class="a" style="left:0;top:551.14px;width:574px;height:1px;background:#eeeeee"></div>
<div class="a" style="left:1.20px;top:539.59px;font-size:10.20px;line-height:1;color:#7a7a7a;letter-spacing:-0.3px">1-1-5</div>
<div class="a" style="left:76.2px;top:540.62px;width:0.8px;height:4px;background:#e2f1de"></div>
<svg class="a" style="left:141.8px;top:536.4px" width="12.1" height="12" viewBox="0 0 12 12">
<rect width="12" height="12" rx="1.4" fill="#2684ff"/><path d="M2.6 6.2 L5 8.4 L9.6 3.6" fill="none" stroke="#fff" stroke-width="1.5" stroke-linecap="round" stroke-linejoin="round"/></svg>
<div class="a" style="left:158.30px;top:539.59px;font-size:10.20px;line-height:1;color:#2a5cc9;">0.3.MilestoneC</div>
<svg class="a" style="left:308.8px;top:536.8px" width="12.2" height="12.2" viewBox="0 0 12 12">
<rect width="12" height="12" rx="1.2" fill="#2b66b3"/>
<path d="M1.4 12 C1.6 9.6 3.2 8.8 6 8.8 C8.8 8.8 10.4 9.6 10.6 12 Z" fill="#e6e8ea"/>
<path d="M4.4 8.8 L6 10.6 L7.6 8.8 Z" fill="#72c23e"/>
<rect x="5.1" y="7.6" width="1.8" height="1.6" fill="#e8b083"/>
<ellipse cx="6" cy="5.4" rx="2.5" ry="2.9" fill="#efc49a"/>
<path d="M3.5 5 C3.3 1.8 8.7 1.8 8.5 5 C7.8 3.6 4.2 3.6 3.5 5 Z" fill="#f4e2b8"/>
<rect x="3.6" y="5" width="4.8" height="1.1" rx="0.4" fill="#6a6a6a" opacity="0.75"/>
</svg>
<div class="a" style="left:325.70px;top:539.59px;font-size:10.20px;line-height:1;color:#8a8a8a;">000Te...</div>
<div class="a" style="left:396.30px;width:0;display:flex;justify-content:center;top:539.59px;font-size:10.20px;line-height:1;color:#333;">0%</div>
<div class="a" style="left:428.00px;top:539.59px;font-size:10.20px;line-height:1;color:#333;">28/Mar/19</div>
<div class="a" style="left:487.80px;top:539.59px;font-size:10.20px;line-height:1;color:#333;">28/Mar/19</div>
<div class="a" style="left:548.30px;top:539.59px;font-size:10.20px;line-height:1;color:#333;">1 day</div>
<div class="a" style="left:0;top:570.05px;width:574px;height:1px;background:#eeeeee"></div>
<div class="a" style="left:1.20px;top:558.50px;font-size:10.20px;line-height:1;color:#7a7a7a;letter-spacing:-0.3px">1-1-6</div>
<div class="a" style="left:76.2px;top:559.54px;width:0.8px;height:4px;background:#e2f1de"></div>
<svg class="a" style="left:129.7px;top:558.1px" width="4.2" height="7.2" viewBox="0 0 4 7"><path d="M0 0 V7 L4 3.5 Z" fill="#4a8fdd"/></svg>
<svg class="a" style="left:141.8px;top:556.0px" width="11.8" height="11.4" viewBox="0 0 12 12">
<rect width="12" height="12" rx="1.3" fill="#7b8698"/><circle cx="6" cy="6" r="2.3" fill="none" stroke="#fff" stroke-width="1.3"/></svg>
<div class="a" style="left:158.30px;top:558.50px;font-size:10.20px;line-height:1;color:#2a5cc9;">4.Test(Ver 1.0)</div>
<svg class="a" style="left:308.8px;top:555.7px" width="12.2" height="12.2" viewBox="0 0 12 12">
<rect width="12" height="12" rx="1.2" fill="#2b66b3"/>
<path d="M1.4 12 C1.6 9.6 3.2 8.8 6 8.8 C8.8 8.8 10.4 9.6 10.6 12 Z" fill="#e6e8ea"/>
<path d="M4.4 8.8 L6 10.6 L7.6 8.8 Z" fill="#72c23e"/>
<rect x="5.1" y="7.6" width="1.8" height="1.6" fill="#e8b083"/>
<ellipse cx="6" cy="5.4" rx="2.5" ry="2.9" fill="#efc49a"/>
<path d="M3.5 5 C3.3 1.8 8.7 1.8 8.5 5 C7.8 3.6 4.2 3.6 3.5 5 Z" fill="#f4e2b8"/>
<rect x="3.6" y="5" width="4.8" height="1.1" rx="0.4" fill="#6a6a6a" opacity="0.75"/>
</svg>
<div class="a" style="left:325.70px;top:558.50px;font-size:10.20px;line-height:1;color:#8a8a8a;">000Te...</div>
<div class="a" style="left:396.30px;width:0;display:flex;justify-content:center;top:558.50px;font-size:10.20px;line-height:1;color:#333;">30%</div>
<div class="a" style="left:428.00px;top:558.50px;font-size:10.20px;line-height:1;color:#333;">28/Mar/19</div>
<div class="a" style="left:487.80px;top:558.50px;font-size:10.20px;line-height:1;color:#333;">18/Apr/19</div>
<div class="a" style="left:548.30px;top:558.50px;font-size:10.20px;line-height:1;color:#333;">16 d..</div>
<div class="a" style="left:0;top:588.97px;width:574px;height:1px;background:#eeeeee"></div>
<div class="a" style="left:1.20px;top:577.42px;font-size:10.20px;line-height:1;color:#7a7a7a;letter-spacing:-0.3px">1-1-7</div>
<div class="a" style="left:76.2px;top:578.45px;width:0.8px;height:4px;background:#e2f1de"></div>
<svg class="a" style="left:128.2px;top:579.3px" width="7.2" height="4.2" viewBox="0 0 7 4"><path d="M0 0 H7 L3.5 4 Z" fill="#4a8fdd"/></svg>
<svg class="a" style="left:141.8px;top:575.0px" width="11.8" height="11.4" viewBox="0 0 12 12">
<rect width="12" height="12" rx="1.3" fill="#7b8698"/><circle cx="6" cy="6" r="2.3" fill="none" stroke="#fff" stroke-width="1.3"/></svg>
<div class="a" style="left:158.30px;top:577.42px;font-size:10.20px;line-height:1;color:#2a5cc9;">5.Release(Ver 1.0)</div>
<svg class="a" style="left:308.8px;top:574.7px" width="12.2" height="12.2" viewBox="0 0 12 12">
<rect width="12" height="12" rx="1.2" fill="#2b66b3"/>
<path d="M3.4 3.6 C3.4 0.8 8.6 0.8 8.6 3.6 L8.9 9.4 H3.1 Z" fill="#a9431f"/>
<path d="M1.6 12 C1.8 9.8 3 9.2 6 9.2 C9 9.2 10.2 9.8 10.4 12 Z" fill="#1d1d1d"/>
<path d="M4.8 9.2 L6 12 L7.2 9.2 Z" fill="#f4efe4"/>
<ellipse cx="6" cy="5.4" rx="1.9" ry="2.6" fill="#f2c6a0"/>
<rect x="5.3" y="7.4" width="1.4" height="2" fill="#eab894"/>
</svg>
<div class="a" style="left:325.70px;top:577.42px;font-size:10.20px;line-height:1;color:#8a8a8a;">001De...</div>
<div class="a" style="left:396.30px;width:0;display:flex;justify-content:center;top:577.42px;font-size:10.20px;line-height:1;color:#333;">30%</div>
<div class="a" style="left:428.00px;top:577.42px;font-size:10.20px;line-height:1;color:#333;">19/Apr/19</div>
<div class="a" style="left:487.80px;top:577.42px;font-size:10.20px;line-height:1;color:#333;">1/May/19</div>
<div class="a" style="left:548.30px;top:577.42px;font-size:10.20px;line-height:1;color:#333;">9 da..</div>
<div class="a" style="left:0;top:607.88px;width:574px;height:1px;background:#eeeeee"></div>
<div class="a" style="left:1.20px;top:596.33px;font-size:10.20px;line-height:1;color:#7a7a7a;letter-spacing:-0.3px">1-1-7-1</div>
<div class="a" style="left:76.2px;top:597.37px;width:0.8px;height:4px;background:#e2f1de"></div>
<svg class="a" style="left:157.6px;top:593.2px" width="12.1" height="12" viewBox="0 0 12 12">
<rect width="12" height="12" rx="1.4" fill="#2684ff"/><path d="M2.6 6.2 L5 8.4 L9.6 3.6" fill="none" stroke="#fff" stroke-width="1.5" stroke-linecap="round" stroke-linejoin="round"/></svg>
<div class="a" style="left:174.90px;top:596.33px;font-size:10.20px;line-height:1;color:#2a5cc9;">5.1.Production Release</div>
<svg class="a" style="left:308.8px;top:593.6px" width="12.4" height="12.4" viewBox="0 0 12 12">
<circle cx="6" cy="6" r="5.8" fill="#eef3f9" stroke="#dde6f0" stroke-width="0.4"/>
<path d="M3 3.4 C3 2 9 2 9 3.4 V6.4 C9 8.8 7.4 9.8 6 9.8 C4.6 9.8 3 8.8 3 6.4 Z" fill="#b9c8da"/>
</svg>
<div class="a" style="left:325.70px;top:596.33px;font-size:10.20px;line-height:1;color:#8a8a8a;">011Op...</div>
<div class="a" style="left:396.30px;width:0;display:flex;justify-content:center;top:596.33px;font-size:10.20px;line-height:1;color:#333;">100%</div>
<div class="a" style="left:428.00px;top:596.33px;font-size:10.20px;line-height:1;color:#333;">19/Apr/19</div>
<div class="a" style="left:487.80px;top:596.33px;font-size:10.20px;line-height:1;color:#333;">19/Apr/19</div>
<div class="a" style="left:548.30px;top:596.33px;font-size:10.20px;line-height:1;color:#333;">1 day</div>
<div class="a" style="left:0;top:626.80px;width:574px;height:1px;background:#eeeeee"></div>
<div class="a" style="left:1.20px;top:615.25px;font-size:10.20px;line-height:1;color:#7a7a7a;letter-spacing:-0.3px">1-1-7-2</div>
<div class="a" style="left:76.2px;top:616.28px;width:0.8px;height:4px;background:#e2f1de"></div>
<svg class="a" style="left:157.6px;top:612.1px" width="12.1" height="12" viewBox="0 0 12 12">
<rect width="12" height="12" rx="1.4" fill="#2684ff"/><path d="M2.6 6.2 L5 8.4 L9.6 3.6" fill="none" stroke="#fff" stroke-width="1.5" stroke-linecap="round" stroke-linejoin="round"/></svg>
<div class="a" style="left:174.90px;top:615.25px;font-size:10.20px;line-height:1;color:#2a5cc9;">5.2.Monitoring of produc...</div>
<svg class="a" style="left:308.8px;top:612.5px" width="12.4" height="12.4" viewBox="0 0 12 12">
<circle cx="6" cy="6" r="5.8" fill="#eef3f9" stroke="#dde6f0" stroke-width="0.4"/>
<path d="M3 3.4 C3 2 9 2 9 3.4 V6.4 C9 8.8 7.4 9.8 6 9.8 C4.6 9.8 3 8.8 3 6.4 Z" fill="#b9c8da"/>
</svg>
<div class="a" style="left:325.70px;top:615.25px;font-size:10.20px;line-height:1;color:#8a8a8a;">011Op...</div>
<div class="a" style="left:396.30px;width:0;display:flex;justify-content:center;top:615.25px;font-size:10.20px;line-height:1;color:#333;">100%</div>
<div class="a" style="left:428.00px;top:615.25px;font-size:10.20px;line-height:1;color:#333;">22/Apr/19</div>
<div class="a" style="left:487.80px;top:615.25px;font-size:10.20px;line-height:1;color:#333;">30/Apr/19</div>
<div class="a" style="left:548.30px;top:615.25px;font-size:10.20px;line-height:1;color:#333;">7 da..</div>
<div class="a" style="left:0;top:645.72px;width:574px;height:1px;background:#eeeeee"></div>
<div class="a" style="left:1.20px;top:634.17px;font-size:10.20px;line-height:1;color:#7a7a7a;letter-spacing:-0.3px">1-1-7-3</div>
<div class="a" style="left:76.2px;top:635.20px;width:0.8px;height:4px;background:#e2f1de"></div>
<svg class="a" style="left:157.6px;top:631.0px" width="12.1" height="12" viewBox="0 0 12 12">
<rect width="12" height="12" rx="1.4" fill="#2684ff"/><path d="M2.6 6.2 L5 8.4 L9.6 3.6" fill="none" stroke="#fff" stroke-width="1.5" stroke-linecap="round" stroke-linejoin="round"/></svg>
<div class="a" style="left:174.90px;top:634.17px;font-size:10.20px;line-height:1;color:#2a5cc9;">5.9.Complete declaration...</div>
<svg class="a" style="left:308.8px;top:631.4px" width="12.2" height="12.2" viewBox="0 0 12 12">
<rect width="12" height="12" rx="1.2" fill="#2b66b3"/>
<path d="M1.4 12 C1.6 9.6 3.2 8.8 6 8.8 C8.8 8.8 10.4 9.6 10.6 12 Z" fill="#e6e8ea"/>
<path d="M4.4 8.8 L6 10.6 L7.6 8.8 Z" fill="#72c23e"/>
<rect x="5.1" y="7.6" width="1.8" height="1.6" fill="#e8b083"/>
<ellipse cx="6" cy="5.4" rx="2.5" ry="2.9" fill="#efc49a"/>
<path d="M3.5 5 C3.3 1.8 8.7 1.8 8.5 5 C7.8 3.6 4.2 3.6 3.5 5 Z" fill="#f4e2b8"/>
<rect x="3.6" y="5" width="4.8" height="1.1" rx="0.4" fill="#6a6a6a" opacity="0.75"/>
</svg>
<div class="a" style="left:325.70px;top:634.17px;font-size:10.20px;line-height:1;color:#8a8a8a;">000Te...</div>
<div class="a" style="left:396.30px;width:0;display:flex;justify-content:center;top:634.17px;font-size:10.20px;line-height:1;color:#333;">100%</div>
<div class="a" style="left:428.00px;top:634.17px;font-size:10.20px;line-height:1;color:#333;">1/May/19</div>
<div class="a" style="left:487.80px;top:634.17px;font-size:10.20px;line-height:1;color:#333;">1/May/19</div>
<div class="a" style="left:548.30px;top:634.17px;font-size:10.20px;line-height:1;color:#333;">1 day</div>
<div class="a" style="left:1.20px;top:653.08px;font-size:10.20px;line-height:1;color:#7a7a7a;letter-spacing:-0.3px">1-2</div>
<div class="a" style="left:76.2px;top:654.12px;width:0.8px;height:4px;background:#e2f1de"></div>
<svg class="a" style="left:125.9px;top:650.7px" width="10.4" height="10.8" viewBox="0 0 10 11">
<path d="M5 0.5 L9.6 2.6 V8.4 L5 10.6 L0.4 8.4 V2.6 Z" fill="#dea530"/>
<path d="M5 0.5 L9.6 2.6 L5 4.6 L0.4 2.6 Z" fill="#f7cf5e"/>
<path d="M5 4.6 L9.6 2.6 V8.4 L5 10.6 Z" fill="#c98b1c"/>
<path d="M2.6 1.5 L7.2 3.6 V5.2" fill="none" stroke="#fff3c0" stroke-width="0.8"/></svg>
<div class="a" style="left:141.70px;top:653.08px;font-size:10.20px;line-height:1;color:#2a5cc9;">Ver 1.1</div>
<div class="a" style="left:428.00px;top:653.08px;font-size:10.20px;line-height:1;color:#333;">25/Mar/19</div>
<div class="a" style="left:487.80px;top:653.08px;font-size:10.20px;line-height:1;color:#333;">4/Apr/19</div>
<div class="a" style="left:548.30px;top:653.08px;font-size:10.20px;line-height:1;color:#333;">9 da..</div>
<div class="a" style="left:583.50px;top:101.5px;width:491.20px;height:562.5px;overflow:hidden">
<div class="a" style="left:-583.50px;top:-101.5px;width:1080px;height:664px">
<div class="a" style="left:470.52px;top:127.30px;width:15.12px;height:26.00px;background:#c3e1e7"></div>
<div class="a" style="left:470.52px;top:153.30px;width:30.24px;height:510.70px;background:#d9fbb3"></div>
<div class="a" style="left:485.64px;top:127.30px;width:15.12px;height:26.00px;background:#f9a8a8"></div>
<div class="a" style="left:576.36px;top:127.30px;width:15.12px;height:26.00px;background:#c3e1e7"></div>
<div class="a" style="left:576.36px;top:153.30px;width:30.24px;height:510.70px;background:#d9fbb3"></div>
<div class="a" style="left:591.48px;top:127.30px;width:15.12px;height:26.00px;background:#f9a8a8"></div>
<div class="a" style="left:682.20px;top:127.30px;width:15.12px;height:26.00px;background:#c3e1e7"></div>
<div class="a" style="left:682.20px;top:153.30px;width:30.24px;height:510.70px;background:#d9fbb3"></div>
<div class="a" style="left:697.32px;top:127.30px;width:15.12px;height:26.00px;background:#f9a8a8"></div>
<div class="a" style="left:788.04px;top:127.30px;width:15.12px;height:26.00px;background:#c3e1e7"></div>
<div class="a" style="left:788.04px;top:153.30px;width:30.24px;height:510.70px;background:#d9fbb3"></div>
<div class="a" style="left:803.16px;top:127.30px;width:15.12px;height:26.00px;background:#f9a8a8"></div>
<div class="a" style="left:893.88px;top:127.30px;width:15.12px;height:26.00px;background:#c3e1e7"></div>
<div class="a" style="left:893.88px;top:153.30px;width:30.24px;height:510.70px;background:#d9fbb3"></div>
<div class="a" style="left:909.00px;top:127.30px;width:15.12px;height:26.00px;background:#f9a8a8"></div>
<div class="a" style="left:999.72px;top:127.30px;width:15.12px;height:26.00px;background:#c3e1e7"></div>
<div class="a" style="left:999.72px;top:153.30px;width:30.24px;height:510.70px;background:#d9fbb3"></div>
<div class="a" style="left:1014.84px;top:127.30px;width:15.12px;height:26.00px;background:#f9a8a8"></div>
<div class="a" style="left:1105.56px;top:127.30px;width:15.12px;height:26.00px;background:#c3e1e7"></div>
<div class="a" style="left:1105.56px;top:153.30px;width:30.24px;height:510.70px;background:#d9fbb3"></div>
<div class="a" style="left:1120.68px;top:127.30px;width:15.12px;height:26.00px;background:#f9a8a8"></div>
<div class="a" style="left:583.50px;top:172.82px;width:491.20px;height:1px;background:#ececec"></div>
<div class="a" style="left:583.50px;top:191.73px;width:491.20px;height:1px;background:#ececec"></div>
<div class="a" style="left:583.50px;top:210.65px;width:491.20px;height:1px;background:#ececec"></div>
<div class="a" style="left:583.50px;top:229.56px;width:491.20px;height:1px;background:#ececec"></div>
<div class="a" style="left:583.50px;top:248.48px;width:491.20px;height:1px;background:#ececec"></div>
<div class="a" style="left:583.50px;top:267.40px;width:491.20px;height:1px;background:#ececec"></div>
<div class="a" style="left:583.50px;top:286.31px;width:491.20px;height:1px;background:#ececec"></div>
<div class="a" style="left:583.50px;top:305.23px;width:491.20px;height:1px;background:#ececec"></div>
<div class="a" style="left:583.50px;top:324.14px;width:491.20px;height:1px;background:#ececec"></div>
<div class="a" style="left:583.50px;top:343.06px;width:491.20px;height:1px;background:#ececec"></div>
<div class="a" style="left:583.50px;top:361.98px;width:491.20px;height:1px;background:#ececec"></div>
<div class="a" style="left:583.50px;top:380.89px;width:491.20px;height:1px;background:#ececec"></div>
<div class="a" style="left:583.50px;top:399.81px;width:491.20px;height:1px;background:#ececec"></div>
<div class="a" style="left:583.50px;top:418.72px;width:491.20px;height:1px;background:#ececec"></div>
<div class="a" style="left:583.50px;top:437.64px;width:491.20px;height:1px;background:#ececec"></div>
<div class="a" style="left:583.50px;top:456.56px;width:491.20px;height:1px;background:#ececec"></div>
<div class="a" style="left:583.50px;top:475.47px;width:491.20px;height:1px;background:#ececec"></div>
<div class="a" style="left:583.50px;top:494.39px;width:491.20px;height:1px;background:#ececec"></div>
<div class="a" style="left:583.50px;top:513.30px;width:491.20px;height:1px;background:#ececec"></div>
<div class="a" style="left:583.50px;top:532.22px;width:491.20px;height:1px;background:#ececec"></div>
<div class="a" style="left:583.50px;top:551.14px;width:491.20px;height:1px;background:#ececec"></div>
<div class="a" style="left:583.50px;top:570.05px;width:491.20px;height:1px;background:#ececec"></div>
<div class="a" style="left:583.50px;top:588.97px;width:491.20px;height:1px;background:#ececec"></div>
<div class="a" style="left:583.50px;top:607.88px;width:491.20px;height:1px;background:#ececec"></div>
<div class="a" style="left:583.50px;top:626.80px;width:491.20px;height:1px;background:#ececec"></div>
<div class="a" style="left:583.50px;top:645.72px;width:491.20px;height:1px;background:#ececec"></div>
<div class="a" style="left:583.50px;top:126.80px;width:491.20px;height:1px;background:#d8d8d8"></div>
<div class="a" style="left:470.02px;top:127.30px;width:1px;height:26.00px;background:#e2e2e2"></div>
<div class="a" style="left:485.14px;top:127.30px;width:1px;height:26.00px;background:#e2e2e2"></div>
<div class="a" style="left:500.26px;top:101.50px;width:1px;height:562.50px;background:#d9d9d9"></div>
<div class="a" style="left:515.38px;top:127.30px;width:1px;height:26.00px;background:#e2e2e2"></div>
<div class="a" style="left:530.50px;top:127.30px;width:1px;height:26.00px;background:#e2e2e2"></div>
<div class="a" style="left:545.62px;top:127.30px;width:1px;height:26.00px;background:#e2e2e2"></div>
<div class="a" style="left:560.74px;top:127.30px;width:1px;height:26.00px;background:#e2e2e2"></div>
<div class="a" style="left:575.86px;top:127.30px;width:1px;height:26.00px;background:#e2e2e2"></div>
<div class="a" style="left:590.98px;top:127.30px;width:1px;height:26.00px;background:#e2e2e2"></div>
<div class="a" style="left:606.10px;top:101.50px;width:1px;height:562.50px;background:#d9d9d9"></div>
<div class="a" style="left:621.22px;top:127.30px;width:1px;height:26.00px;background:#e2e2e2"></div>
<div class="a" style="left:636.34px;top:127.30px;width:1px;height:26.00px;background:#e2e2e2"></div>
<div class="a" style="left:651.46px;top:127.30px;width:1px;height:26.00px;background:#e2e2e2"></div>
<div class="a" style="left:666.58px;top:127.30px;width:1px;height:26.00px;background:#e2e2e2"></div>
<div class="a" style="left:681.70px;top:127.30px;width:1px;height:26.00px;background:#e2e2e2"></div>
<div class="a" style="left:696.82px;top:127.30px;width:1px;height:26.00px;background:#e2e2e2"></div>
<div class="a" style="left:711.94px;top:101.50px;width:1px;height:562.50px;background:#d9d9d9"></div>
<div class="a" style="left:727.06px;top:127.30px;width:1px;height:26.00px;background:#e2e2e2"></div>
<div class="a" style="left:742.18px;top:127.30px;width:1px;height:26.00px;background:#e2e2e2"></div>
<div class="a" style="left:757.30px;top:127.30px;width:1px;height:26.00px;background:#e2e2e2"></div>
<div class="a" style="left:772.42px;top:127.30px;width:1px;height:26.00px;background:#e2e2e2"></div>
<div class="a" style="left:787.54px;top:127.30px;width:1px;height:26.00px;background:#e2e2e2"></div>
<div class="a" style="left:802.66px;top:127.30px;width:1px;height:26.00px;background:#e2e2e2"></div>
<div class="a" style="left:817.78px;top:101.50px;width:1px;height:562.50px;background:#d9d9d9"></div>
<div class="a" style="left:832.90px;top:127.30px;width:1px;height:26.00px;background:#e2e2e2"></div>
<div class="a" style="left:848.02px;top:127.30px;width:1px;height:26.00px;background:#e2e2e2"></div>
<div class="a" style="left:863.14px;top:127.30px;width:1px;height:26.00px;background:#e2e2e2"></div>
<div class="a" style="left:878.26px;top:127.30px;width:1px;height:26.00px;background:#e2e2e2"></div>
<div class="a" style="left:893.38px;top:127.30px;width:1px;height:26.00px;background:#e2e2e2"></div>
<div class="a" style="left:908.50px;top:127.30px;width:1px;height:26.00px;background:#e2e2e2"></div>
<div class="a" style="left:923.62px;top:101.50px;width:1px;height:562.50px;background:#d9d9d9"></div>
<div class="a" style="left:938.74px;top:127.30px;width:1px;height:26.00px;background:#e2e2e2"></div>
<div class="a" style="left:953.86px;top:127.30px;width:1px;height:26.00px;background:#e2e2e2"></div>
<div class="a" style="left:968.98px;top:127.30px;width:1px;height:26.00px;background:#e2e2e2"></div>
<div class="a" style="left:984.10px;top:127.30px;width:1px;height:26.00px;background:#e2e2e2"></div>
<div class="a" style="left:999.22px;top:127.30px;width:1px;height:26.00px;background:#e2e2e2"></div>
<div class="a" style="left:1014.34px;top:127.30px;width:1px;height:26.00px;background:#e2e2e2"></div>
<div class="a" style="left:1029.46px;top:101.50px;width:1px;height:562.50px;background:#d9d9d9"></div>
<div class="a" style="left:1044.58px;top:127.30px;width:1px;height:26.00px;background:#e2e2e2"></div>
<div class="a" style="left:1059.70px;top:127.30px;width:1px;height:26.00px;background:#e2e2e2"></div>
<div class="a" style="left:1074.82px;top:127.30px;width:1px;height:26.00px;background:#e2e2e2"></div>
<div class="a" style="left:1089.94px;top:127.30px;width:1px;height:26.00px;background:#e2e2e2"></div>
<div class="a" style="left:1105.06px;top:127.30px;width:1px;height:26.00px;background:#e2e2e2"></div>
<div class="a" style="left:1120.18px;top:127.30px;width:1px;height:26.00px;background:#e2e2e2"></div>
<div class="a" style="left:1135.30px;top:101.50px;width:1px;height:562.50px;background:#d9d9d9"></div>
<div class="a" style="left:1150.42px;top:127.30px;width:1px;height:26.00px;background:#e2e2e2"></div>
<div class="a" style="left:1165.54px;top:127.30px;width:1px;height:26.00px;background:#e2e2e2"></div>
<div class="a" style="left:1180.66px;top:127.30px;width:1px;height:26.00px;background:#e2e2e2"></div>
<div class="a" style="left:1195.78px;top:127.30px;width:1px;height:26.00px;background:#e2e2e2"></div>
<div class="a" style="left:400.62px;top:109.53px;font-size:10.00px;line-height:1;color:#4a4a4a;">Mon 04 Feb 2019</div>
<div class="a" style="left:506.46px;top:109.53px;font-size:10.00px;line-height:1;color:#4a4a4a;">Mon 11 Feb 2019</div>
<div class="a" style="left:612.30px;top:109.53px;font-size:10.00px;line-height:1;color:#4a4a4a;">Mon 18 Feb 2019</div>
<div class="a" style="left:718.14px;top:109.53px;font-size:10.00px;line-height:1;color:#4a4a4a;">Mon 25 Feb 2019</div>
<div class="a" style="left:823.98px;top:109.53px;font-size:10.00px;line-height:1;color:#4a4a4a;">Mon 04 Mar 2019</div>
<div class="a" style="left:929.82px;top:109.53px;font-size:10.00px;line-height:1;color:#4a4a4a;">Mon 11 Mar 2019</div>
<div class="a" style="left:1035.66px;top:109.53px;font-size:10.00px;line-height:1;color:#4a4a4a;">Mon 18 Mar 2019</div>
<div class="a" style="left:478.08px;width:0;display:flex;justify-content:center;top:136.21px;font-size:9.20px;line-height:1;color:#777;">S</div>
<div class="a" style="left:493.20px;width:0;display:flex;justify-content:center;top:136.21px;font-size:9.20px;line-height:1;color:#777;">S</div>
<div class="a" style="left:508.32px;width:0;display:flex;justify-content:center;top:136.21px;font-size:9.20px;line-height:1;color:#444;">M</div>
<div class="a" style="left:523.44px;width:0;display:flex;justify-content:center;top:136.21px;font-size:9.20px;line-height:1;color:#444;">T</div>
<div class="a" style="left:538.56px;width:0;display:flex;justify-content:center;top:136.21px;font-size:9.20px;line-height:1;color:#444;">W</div>
<div class="a" style="left:553.68px;width:0;display:flex;justify-content:center;top:136.21px;font-size:9.20px;line-height:1;color:#444;">T</div>
<div class="a" style="left:568.80px;width:0;display:flex;justify-content:center;top:136.21px;font-size:9.20px;line-height:1;color:#444;">F</div>
<div class="a" style="left:583.92px;width:0;display:flex;justify-content:center;top:136.21px;font-size:9.20px;line-height:1;color:#777;">S</div>
<div class="a" style="left:599.04px;width:0;display:flex;justify-content:center;top:136.21px;font-size:9.20px;line-height:1;color:#777;">S</div>
<div class="a" style="left:614.16px;width:0;display:flex;justify-content:center;top:136.21px;font-size:9.20px;line-height:1;color:#444;">M</div>
<div class="a" style="left:629.28px;width:0;display:flex;justify-content:center;top:136.21px;font-size:9.20px;line-height:1;color:#444;">T</div>
<div class="a" style="left:644.40px;width:0;display:flex;justify-content:center;top:136.21px;font-size:9.20px;line-height:1;color:#444;">W</div>
<div class="a" style="left:659.52px;width:0;display:flex;justify-content:center;top:136.21px;font-size:9.20px;line-height:1;color:#444;">T</div>
<div class="a" style="left:674.64px;width:0;display:flex;justify-content:center;top:136.21px;font-size:9.20px;line-height:1;color:#444;">F</div>
<div class="a" style="left:689.76px;width:0;display:flex;justify-content:center;top:136.21px;font-size:9.20px;line-height:1;color:#777;">S</div>
<div class="a" style="left:704.88px;width:0;display:flex;justify-content:center;top:136.21px;font-size:9.20px;line-height:1;color:#777;">S</div>
<div class="a" style="left:720.00px;width:0;display:flex;justify-content:center;top:136.21px;font-size:9.20px;line-height:1;color:#444;">M</div>
<div class="a" style="left:735.12px;width:0;display:flex;justify-content:center;top:136.21px;font-size:9.20px;line-height:1;color:#444;">T</div>
<div class="a" style="left:750.24px;width:0;display:flex;justify-content:center;top:136.21px;font-size:9.20px;line-height:1;color:#444;">W</div>
<div class="a" style="left:765.36px;width:0;display:flex;justify-content:center;top:136.21px;font-size:9.20px;line-height:1;color:#444;">T</div>
<div class="a" style="left:780.48px;width:0;display:flex;justify-content:center;top:136.21px;font-size:9.20px;line-height:1;color:#444;">F</div>
<div class="a" style="left:795.60px;width:0;display:flex;justify-content:center;top:136.21px;font-size:9.20px;line-height:1;color:#777;">S</div>
<div class="a" style="left:810.72px;width:0;display:flex;justify-content:center;top:136.21px;font-size:9.20px;line-height:1;color:#777;">S</div>
<div class="a" style="left:825.84px;width:0;display:flex;justify-content:center;top:136.21px;font-size:9.20px;line-height:1;color:#444;">M</div>
<div class="a" style="left:840.96px;width:0;display:flex;justify-content:center;top:136.21px;font-size:9.20px;line-height:1;color:#444;">T</div>
<div class="a" style="left:856.08px;width:0;display:flex;justify-content:center;top:136.21px;font-size:9.20px;line-height:1;color:#444;">W</div>
<div class="a" style="left:871.20px;width:0;display:flex;justify-content:center;top:136.21px;font-size:9.20px;line-height:1;color:#444;">T</div>
<div class="a" style="left:886.32px;width:0;display:flex;justify-content:center;top:136.21px;font-size:9.20px;line-height:1;color:#444;">F</div>
<div class="a" style="left:901.44px;width:0;display:flex;justify-content:center;top:136.21px;font-size:9.20px;line-height:1;color:#777;">S</div>
<div class="a" style="left:916.56px;width:0;display:flex;justify-content:center;top:136.21px;font-size:9.20px;line-height:1;color:#777;">S</div>
<div class="a" style="left:931.68px;width:0;display:flex;justify-content:center;top:136.21px;font-size:9.20px;line-height:1;color:#444;">M</div>
<div class="a" style="left:946.80px;width:0;display:flex;justify-content:center;top:136.21px;font-size:9.20px;line-height:1;color:#444;">T</div>
<div class="a" style="left:961.92px;width:0;display:flex;justify-content:center;top:136.21px;font-size:9.20px;line-height:1;color:#444;">W</div>
<div class="a" style="left:977.04px;width:0;display:flex;justify-content:center;top:136.21px;font-size:9.20px;line-height:1;color:#444;">T</div>
<div class="a" style="left:992.16px;width:0;display:flex;justify-content:center;top:136.21px;font-size:9.20px;line-height:1;color:#444;">F</div>
<div class="a" style="left:1007.28px;width:0;display:flex;justify-content:center;top:136.21px;font-size:9.20px;line-height:1;color:#777;">S</div>
<div class="a" style="left:1022.40px;width:0;display:flex;justify-content:center;top:136.21px;font-size:9.20px;line-height:1;color:#777;">S</div>
<div class="a" style="left:1037.52px;width:0;display:flex;justify-content:center;top:136.21px;font-size:9.20px;line-height:1;color:#444;">M</div>
<div class="a" style="left:1052.64px;width:0;display:flex;justify-content:center;top:136.21px;font-size:9.20px;line-height:1;color:#444;">T</div>
<div class="a" style="left:1067.76px;width:0;display:flex;justify-content:center;top:136.21px;font-size:9.20px;line-height:1;color:#444;">W</div>
<div class="a" style="left:1082.88px;width:0;display:flex;justify-content:center;top:136.21px;font-size:9.20px;line-height:1;color:#444;">T</div>
<div class="a" style="left:1098.00px;width:0;display:flex;justify-content:center;top:136.21px;font-size:9.20px;line-height:1;color:#444;">F</div>
<div class="a" style="left:1113.12px;width:0;display:flex;justify-content:center;top:136.21px;font-size:9.20px;line-height:1;color:#777;">S</div>
<div class="a" style="left:1128.24px;width:0;display:flex;justify-content:center;top:136.21px;font-size:9.20px;line-height:1;color:#777;">S</div>
<div class="a" style="left:1143.36px;width:0;display:flex;justify-content:center;top:136.21px;font-size:9.20px;line-height:1;color:#444;">M</div>
<div class="a" style="left:1158.48px;width:0;display:flex;justify-content:center;top:136.21px;font-size:9.20px;line-height:1;color:#444;">T</div>
<div class="a" style="left:1173.60px;width:0;display:flex;justify-content:center;top:136.21px;font-size:9.20px;line-height:1;color:#444;">W</div>
<div class="a" style="left:1188.72px;width:0;display:flex;justify-content:center;top:136.21px;font-size:9.20px;line-height:1;color:#444;">T</div>
<div class="a" style="left:1203.84px;width:0;display:flex;justify-content:center;top:136.21px;font-size:9.20px;line-height:1;color:#444;">F</div>
<svg class="a" style="left:0;top:0" width="1080" height="664" viewBox="0 0 1080 664"><path d="M645.6 154.5 V664" stroke="#6f6f6f" stroke-width="1.8" stroke-dasharray="4.5 3.06"/></svg>
<div class="a" style="left:622.00px;top:176.92px;width:468.00px;height:5.1px;background:#33cc6e"></div>
<div class="a" style="left:622.00px;top:176.92px;width:32.90px;height:5.1px;background:#7ee9bd"></div>
<div class="a" style="left:622.00px;top:195.83px;width:242.40px;height:5.1px;background:#33cc6e"></div>
<div class="a" style="left:758.70px;top:290.41px;width:302.00px;height:5.1px;background:#33cc6e"></div>
<div class="a" style="left:818.70px;top:441.74px;width:271.30px;height:5.1px;background:#33cc6e"></div>
<div class="a" style="left:818.70px;top:441.74px;width:9.80px;height:5.1px;background:#7ee9bd"></div>
<div class="a" style="left:622.00px;top:214.85px;width:136.50px;height:5.8px;background:#5a9bd9"></div>
<div class="a" style="left:758.50px;top:233.76px;width:106.50px;height:5.8px;background:#5a9bd9"></div>
<div class="a" style="left:652.90px;top:252.68px;width:121.10px;height:5.8px;background:#5a9bd9"></div>
<div class="a" style="left:774.00px;top:271.60px;width:90.40px;height:5.8px;background:#5a9bd9"></div>
<div class="a" style="left:758.60px;top:309.43px;width:242.40px;height:5.8px;background:#5a9bd9"></div>
<div class="a" style="left:1030.90px;top:328.34px;width:30.60px;height:5.8px;background:#5a9bd9"></div>
<div class="a" style="left:985.60px;top:347.26px;width:14.90px;height:5.8px;background:#5a9bd9"></div>
<div class="a" style="left:864.50px;top:366.18px;width:75.40px;height:5.8px;background:#5a9bd9"></div>
<div class="a" style="left:818.60px;top:385.09px;width:121.30px;height:5.8px;background:#5a9bd9"></div>
<div class="a" style="left:879.70px;top:422.92px;width:14.90px;height:5.8px;background:#5a9bd9"></div>
<div class="a" style="left:818.70px;top:460.76px;width:15.00px;height:5.8px;background:#5a9bd9"></div>
<div class="a" style="left:834.20px;top:479.67px;width:211.60px;height:5.8px;background:#5a9bd9"></div>
<div class="a" style="left:1045.80px;top:498.59px;width:44.20px;height:5.8px;background:#5a9bd9"></div>
<div class="a" style="right:481.00px;top:179.90px;font-size:10.30px;line-height:1;color:#9a9a9a;">Ver 1.0</div>
<div class="a" style="right:481.00px;top:198.81px;font-size:10.30px;line-height:1;color:#9a9a9a;">1.Requirement (Ver 1.0) _1</div>
<div class="a" style="right:481.00px;top:217.73px;font-size:10.30px;line-height:1;color:#9a9a9a;">1.0.Start of Requirements definition</div>
<div class="a" style="right:344.50px;top:236.65px;font-size:10.30px;line-height:1;color:#9a9a9a;">1.1.Create of Requirements definition</div>
<div class="a" style="right:450.00px;top:255.56px;font-size:10.30px;line-height:1;color:#9a9a9a;">1.2.Review of Requirements definition</div>
<div class="a" style="right:329.00px;top:274.48px;font-size:10.30px;line-height:1;color:#9a9a9a;">1.9.Exit review of Requirements definition</div>
<div class="a" style="right:344.30px;top:293.39px;font-size:10.30px;line-height:1;color:#9a9a9a;">2.Design(Ver 1.0)</div>
<div class="a" style="right:344.40px;top:312.31px;font-size:10.30px;line-height:1;color:#9a9a9a;">2.3.Functionality detail</div>
<div class="a" style="right:72.00px;top:331.23px;font-size:10.30px;line-height:1;color:#9a9a9a;">2.4.Review of Functionality detail</div>
<div class="a" style="right:117.40px;top:350.14px;font-size:10.30px;line-height:1;color:#9a9a9a;">2.9.Exit review of Design</div>
<div class="a" style="right:238.50px;top:369.06px;font-size:10.30px;line-height:1;color:#9a9a9a;">2.0.Start of Design</div>
<div class="a" style="right:284.40px;top:387.97px;font-size:10.30px;line-height:1;color:#9a9a9a;">2.1.Basic functionalities</div>
<div class="a" style="right:168.00px;top:408.29px;font-size:10.30px;line-height:1;color:#9a9a9a;">2.2.Review of Basic functionalities</div>
<div class="a" style="right:223.30px;top:425.81px;font-size:10.30px;line-height:1;color:#9a9a9a;">0.2.MilestoneB</div>
<div class="a" style="right:284.30px;top:444.72px;font-size:10.30px;line-height:1;color:#9a9a9a;">3.Implementation(Ver 1.0)</div>
<div class="a" style="right:284.30px;top:463.64px;font-size:10.30px;line-height:1;color:#111;">3.0.Start of Implementation</div>
<div class="a" style="right:268.80px;top:482.55px;font-size:10.30px;line-height:1;color:#9a9a9a;">3.1.Implementation</div>
<div class="a" style="right:57.20px;top:501.47px;font-size:10.30px;line-height:1;color:#9a9a9a;">3.2.Unit test</div>
<div class="a" style="left:991.00px;top:520.39px;font-size:10.30px;line-height:1;color:#9a9a9a;">3.9.Exit review of Implementation</div>
<div class="a" style="left:870.70px;top:198.81px;font-size:10.30px;line-height:1;color:#9a9a9a;">000Team Lead</div>
<div class="a" style="left:773.70px;top:217.73px;font-size:10.30px;line-height:1;color:#9a9a9a;">000Team Lead</div>
<div class="a" style="left:879.50px;top:236.65px;font-size:10.30px;line-height:1;color:#9a9a9a;">000Team Lead</div>
<div class="a" style="left:788.80px;top:255.56px;font-size:10.30px;line-height:1;color:#9a9a9a;">001Developer</div>
<div class="a" style="left:879.50px;top:274.48px;font-size:10.30px;line-height:1;color:#9a9a9a;">000Team Lead</div>
<div class="a" style="left:1067.50px;top:293.39px;font-size:10.30px;line-height:1;color:#9a9a9a;">000Team Lead</div>
<div class="a" style="left:1016.20px;top:312.31px;font-size:10.30px;line-height:1;color:#9a9a9a;">000Team Lead</div>
<div class="a" style="left:1016.00px;top:350.14px;font-size:10.30px;line-height:1;color:#9a9a9a;">000Team Lead</div>
<div class="a" style="left:956.00px;top:369.06px;font-size:10.30px;line-height:1;color:#9a9a9a;">000Team Lead</div>
<div class="a" style="left:956.00px;top:387.97px;font-size:10.30px;line-height:1;color:#9a9a9a;">000Team Lead</div>
<div class="a" style="left:956.70px;top:408.29px;font-size:10.30px;line-height:1;color:#9a9a9a;">021Tester</div>
<div class="a" style="left:910.30px;top:425.81px;font-size:10.30px;line-height:1;color:#9a9a9a;">000Team Lead</div>
<div class="a" style="left:849.30px;top:463.64px;font-size:10.30px;line-height:1;color:#111;">001Developer</div>
<div class="a" style="left:1061.30px;top:482.55px;font-size:10.30px;line-height:1;color:#9a9a9a;">001Developer</div>
<svg class="a" style="left:0;top:0" width="1080" height="664" viewBox="0 0 1080 664"><path d="M622.00 181.92 H628.00 L622.00 188.12 Z" fill="#33cc6e"/><path d="M622.00 200.83 H628.00 L622.00 207.03 Z" fill="#33cc6e"/><path d="M864.40 200.83 H858.40 L864.40 207.03 Z" fill="#33cc6e"/><path d="M758.70 295.41 H764.70 L758.70 301.61 Z" fill="#33cc6e"/><path d="M1060.70 295.41 H1054.70 L1060.70 301.61 Z" fill="#33cc6e"/><path d="M818.70 446.74 H824.70 L818.70 452.94 Z" fill="#33cc6e"/><path d="M938.2 404.21 L942.2 408.21 L938.2 412.21 L934.2 408.21 Z" fill="#22b573"/><path d="M754.30 211.45 H763.10 L758.70 216.45 Z" fill="#f01010"/><path d="M758.70 216.25 V229.45" stroke="#ff5a5a" stroke-width="1" stroke-dasharray="3 0.8"/><path d="M860.60 230.36 H869.40 L865.00 235.36 Z" fill="#f01010"/><path d="M865.00 235.16 V248.36" stroke="#ff5a5a" stroke-width="1" stroke-dasharray="3 0.8"/><path d="M769.60 249.28 H778.40 L774.00 254.28 Z" fill="#f01010"/><path d="M774.00 254.08 V267.28" stroke="#ff5a5a" stroke-width="1" stroke-dasharray="3 0.8"/><path d="M845.20 268.20 H854.00 L849.60 273.20 Z" fill="#f01010"/><path d="M849.60 273.00 V286.20" stroke="#ff5a5a" stroke-width="1" stroke-dasharray="3 0.8"/><path d="M996.60 306.03 H1005.40 L1001.00 311.03 Z" fill="#f01010"/><path d="M1001.00 310.83 V324.03" stroke="#ff5a5a" stroke-width="1" stroke-dasharray="3 0.8"/><path d="M1057.10 324.94 H1065.90 L1061.50 329.94 Z" fill="#f01010"/><path d="M1061.50 329.74 V342.94" stroke="#ff5a5a" stroke-width="1" stroke-dasharray="3 0.8"/><path d="M951.60 362.78 H960.40 L956.00 367.78 Z" fill="#f01010"/><path d="M956.00 367.58 V380.78" stroke="#ff5a5a" stroke-width="1" stroke-dasharray="3 0.8"/><path d="M966.80 381.69 H975.60 L971.20 386.69 Z" fill="#f01010"/><path d="M971.20 386.49 V399.69" stroke="#ff5a5a" stroke-width="1" stroke-dasharray="3 0.8"/><path d="M1072.60 400.61 H1081.40 L1077.00 405.61 Z" fill="#f01010"/><path d="M1077.00 405.41 V418.61" stroke="#ff5a5a" stroke-width="1" stroke-dasharray="3 0.8"/><path d="M648.30 627.60 H657.10 L652.70 632.60 Z" fill="#f01010"/><path d="M652.70 632.40 V645.60" stroke="#ff5a5a" stroke-width="1" stroke-dasharray="3 0.8"/><path d="M758.50 217.85 L762.60 217.85 L762.60 233.76" fill="none" stroke="#4b91dc" stroke-width="1.2"/><path d="M759.40 227.96 L765.80 227.96 L762.60 233.76 Z" fill="#4b91dc"/><path d="M865.00 236.76 L868.50 236.76 L868.50 246.10 L642.00 246.10 L642.00 255.48 L652.90 255.48" fill="none" stroke="#4b91dc" stroke-width="1.2"/><path d="M647.10 252.28 L647.10 258.68 L652.90 255.48 Z" fill="#4b91dc"/><path d="M774.00 255.68 L777.80 255.68 L777.80 271.60" fill="none" stroke="#4b91dc" stroke-width="1.2"/><path d="M774.60 265.80 L781.00 265.80 L777.80 271.60 Z" fill="#4b91dc"/><path d="M864.40 274.60 L868.90 274.60 L868.90 366.18" fill="none" stroke="#4b91dc" stroke-width="1.2"/><path d="M865.70 360.38 L872.10 360.38 L868.90 366.18 Z" fill="#4b91dc"/><path d="M1001.00 312.43 L1035.00 312.43 L1035.00 328.34" fill="none" stroke="#4b91dc" stroke-width="1.2"/><path d="M1031.80 322.54 L1038.20 322.54 L1035.00 328.34 Z" fill="#4b91dc"/><path d="M1061.50 331.34 L1065.00 331.34 L1065.00 340.40 L975.30 340.40 L975.30 350.06 L985.60 350.06" fill="none" stroke="#4b91dc" stroke-width="1.2"/><path d="M979.80 346.86 L979.80 353.26 L985.60 350.06 Z" fill="#4b91dc"/><path d="M1000.50 350.26 L1004.50 350.26 L1004.50 416.20 L869.40 416.20 L869.40 425.72 L879.70 425.72" fill="none" stroke="#4b91dc" stroke-width="1.2"/><path d="M873.90 422.52 L873.90 428.92 L879.70 425.72 Z" fill="#4b91dc"/><path d="M1004.50 416.20 L1004.50 453.70 L808.60 453.70 L808.60 463.56 L818.70 463.56" fill="none" stroke="#4b91dc" stroke-width="1.2"/><path d="M812.90 460.36 L812.90 466.76 L818.70 463.56 Z" fill="#4b91dc"/><path d="M939.90 369.18 L944.00 369.18 L944.00 377.70 L808.80 377.70 L808.80 387.89 L818.60 387.89" fill="none" stroke="#4b91dc" stroke-width="1.2"/><path d="M812.80 384.69 L812.80 391.09 L818.60 387.89 Z" fill="#4b91dc"/><path d="M939.90 388.09 L944.00 388.09 L944.00 400.50 L924.00 400.50 L924.00 409.61 L933.50 409.61" fill="none" stroke="#4b91dc" stroke-width="1.2"/><path d="M927.70 406.41 L927.70 412.81 L933.50 409.61 Z" fill="#4b91dc"/><path d="M942.00 409.81 L946.40 409.81 L946.40 322.30 L748.00 322.30 L748.00 312.23 L758.60 312.23" fill="none" stroke="#4b91dc" stroke-width="1.2"/><path d="M752.80 309.03 L752.80 315.43 L758.60 312.23 Z" fill="#4b91dc"/><path d="M833.70 463.76 L838.90 463.76 L838.90 479.67" fill="none" stroke="#4b91dc" stroke-width="1.2"/><path d="M835.70 473.87 L842.10 473.87 L838.90 479.67 Z" fill="#4b91dc"/><path d="M1045.80 482.67 L1050.20 482.67 L1050.20 498.59" fill="none" stroke="#4b91dc" stroke-width="1.2"/><path d="M1047.00 492.79 L1053.40 492.79 L1050.20 498.59 Z" fill="#4b91dc"/><path d="M645.5 151.6 L641.4 146.8 C640 144.6 642 141.9 645.5 141.9 C649 141.9 651 144.6 649.6 146.8 Z" fill="#fff" stroke="#f01818" stroke-width="1.5" stroke-linejoin="round"/></svg>
</div></div>
<div class="a" style="left:1075px;top:0;width:5px;height:664px;background:#fff"></div>
<div class="a" style="left:0;top:0;width:1080px;height:2px;background:#fff"></div>
</body></html>
